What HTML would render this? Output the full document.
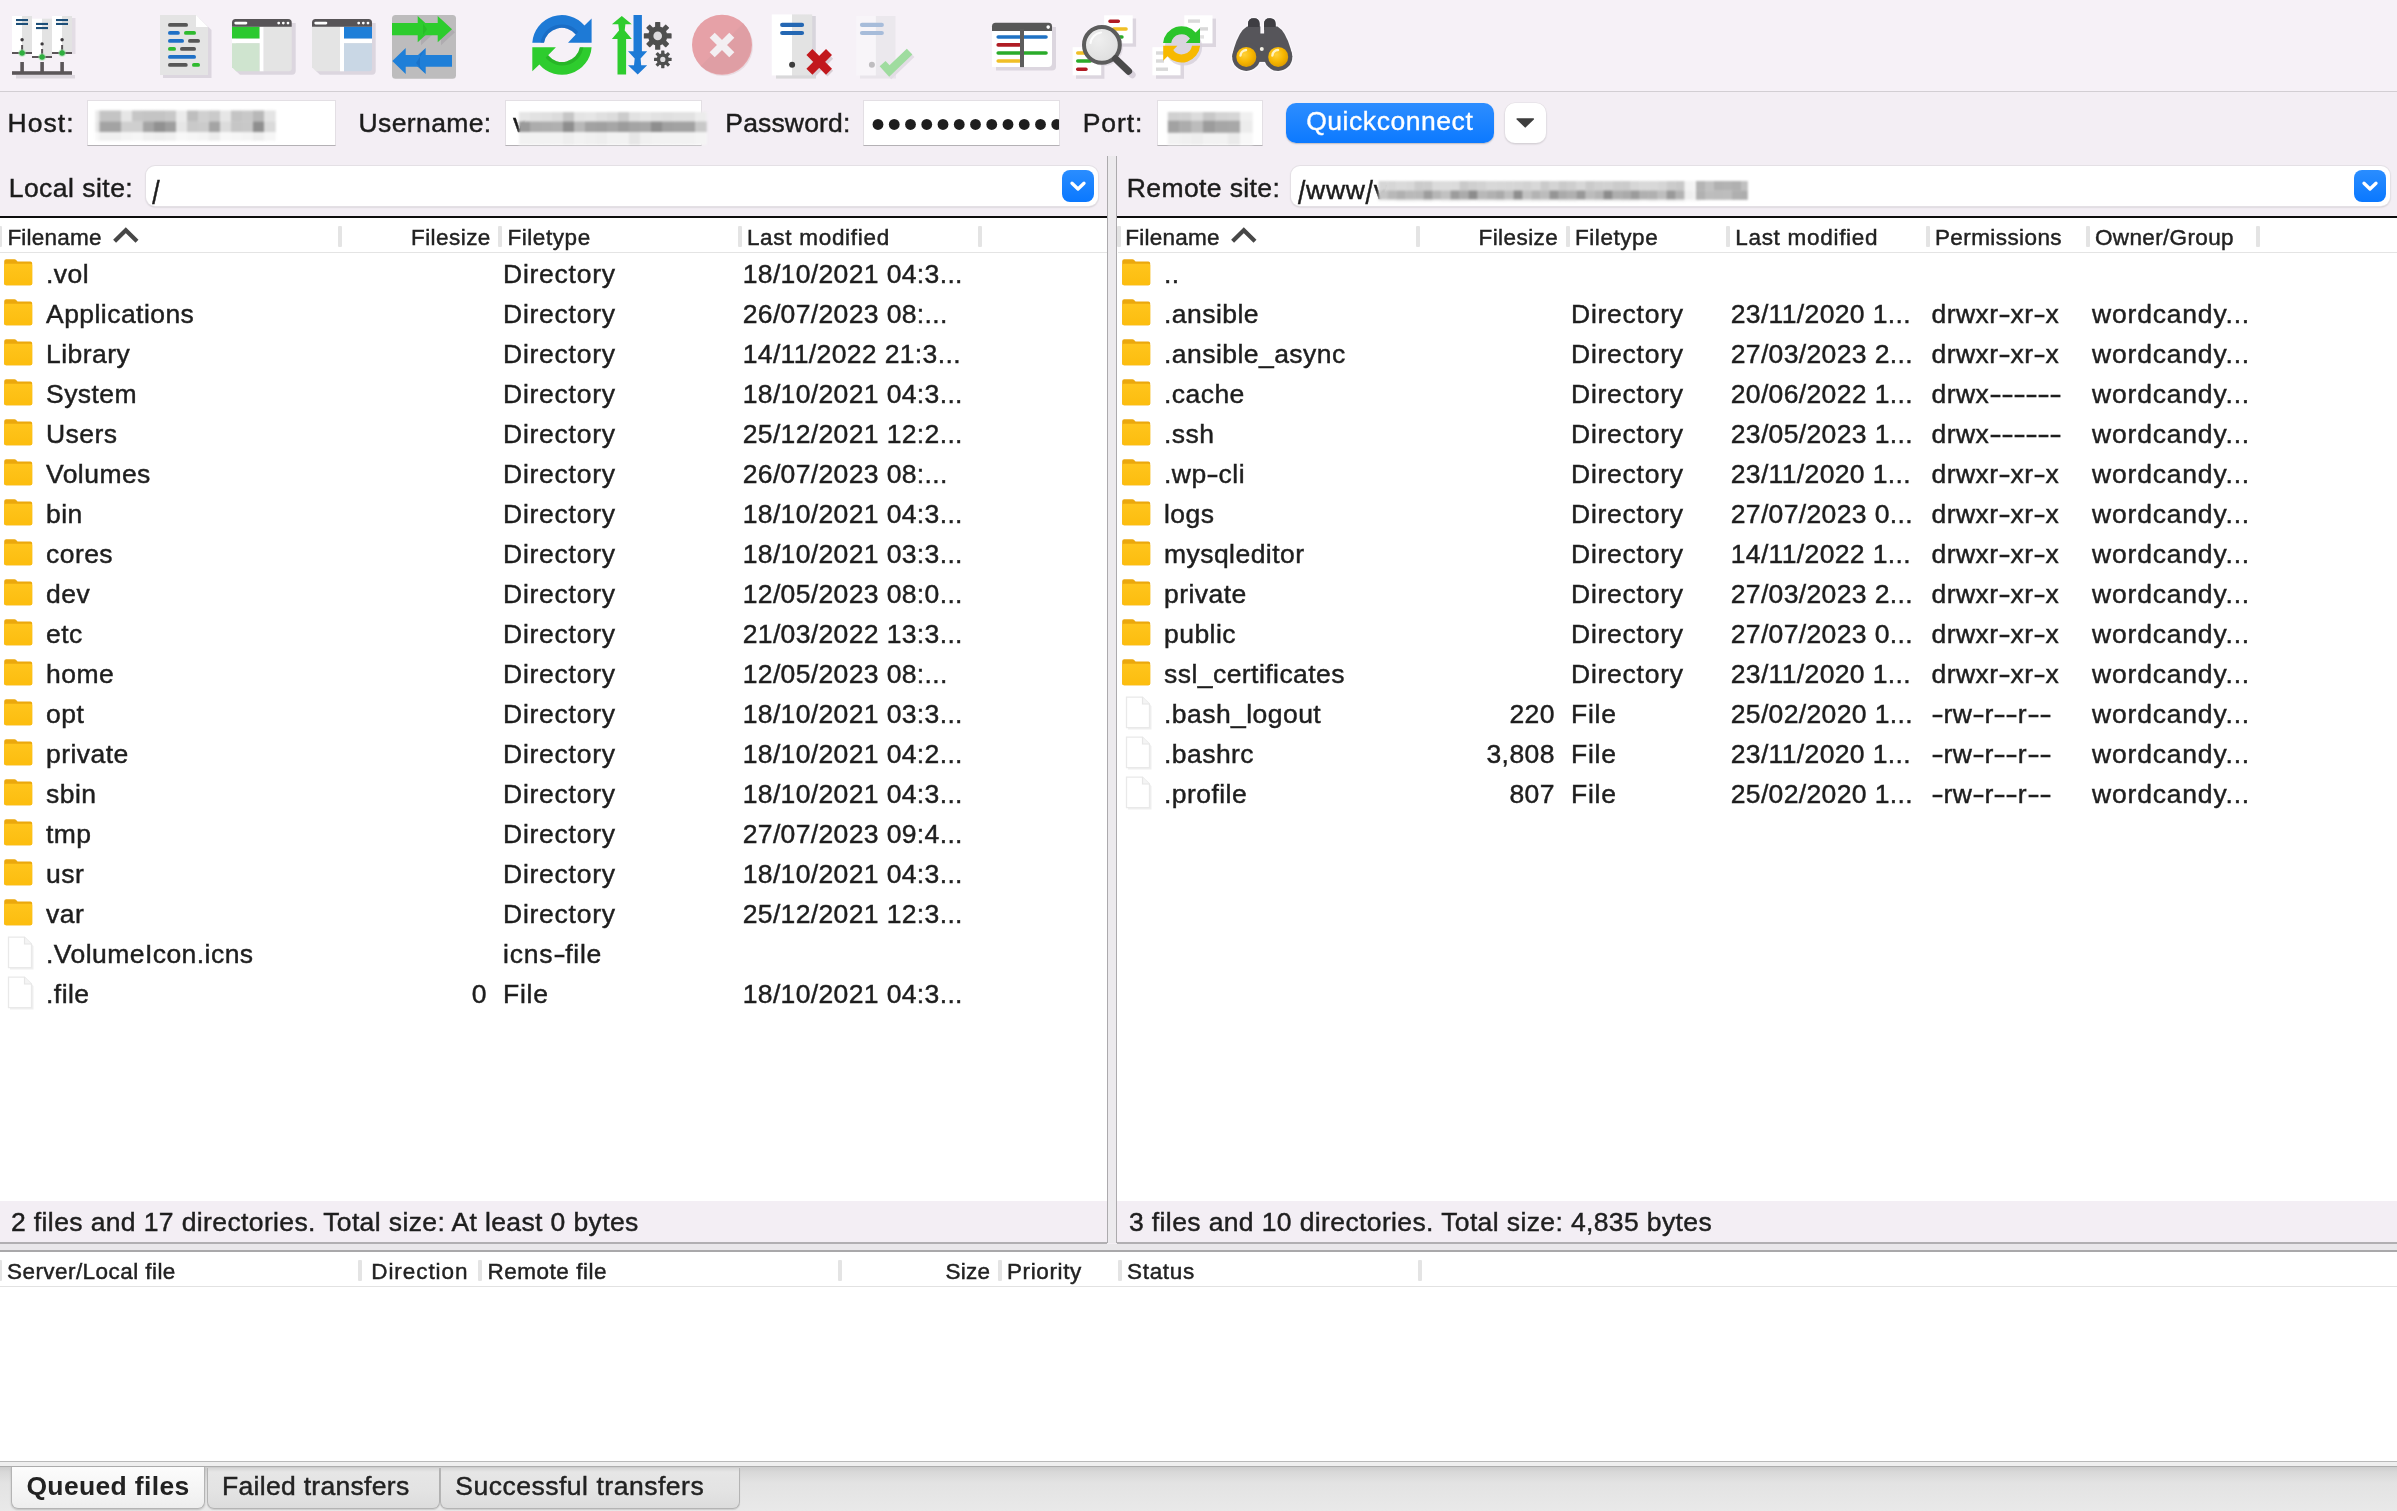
<!DOCTYPE html>
<html lang="en">
<head>
<meta charset="utf-8">
<title>FileZilla</title>
<style>
*{box-sizing:border-box;margin:0;padding:0}
html,body{width:2397px;height:1511px;overflow:hidden;background:#f3eef4}
body{font-family:"Liberation Sans",sans-serif;color:#222;position:relative;-webkit-text-stroke:.45px currentColor}
.abs{position:absolute}
#toolbar{position:absolute;left:0;top:0;width:2397px;height:91px;background:#f6f1f7}
#tbline{position:absolute;left:0;top:90.6px;width:2397px;height:1.2px;background:#d2ced3}
#qc{position:absolute;left:0;top:93px;width:2397px;height:64px;background:#f3eef4}
.lbl{position:absolute;font-size:26.5px;line-height:32px;color:#1c1c1c;white-space:nowrap}
.inp{position:absolute;background:#fff;border:1px solid #e3dfe4;border-bottom-color:#b4b1b5;height:46px}
.combo{position:absolute;background:#fff;border-radius:9px;box-shadow:0 0 0 1px #e4e0e5,0 1px 2px rgba(0,0,0,.25);height:40px}
.bluebtn{position:absolute;width:32px;height:32px;border-radius:8px;background:linear-gradient(#2a8dff,#0a78ff)}
.pane{position:absolute;background:#fff}
.hdr{position:absolute;font-size:22.5px;line-height:30px;color:#222;white-space:nowrap;letter-spacing:.5px}
.sep{position:absolute;width:4px;height:21px;background:#e4e4e4;border-radius:1px}
.c{position:absolute;font-size:26.5px;line-height:40px;height:40px;color:#1e1e1e;white-space:nowrap;letter-spacing:.45px}
.c i{font-style:normal;display:inline-block;letter-spacing:0;transform:scaleX(1.42);margin:0 1.6px}
.c.r{text-align:right}
.ic{position:absolute}
.status{position:absolute;font-size:26.5px;line-height:40px;color:#1e1e1e;white-space:nowrap;letter-spacing:.38px}
.tab{position:absolute;top:1467.5px;height:41px;font-size:26.5px;line-height:36px;color:#222;white-space:nowrap;border:1px solid #b4b4b4;border-top:none;border-radius:0 0 7px 7px;background:linear-gradient(#d6d6d6 0,#e6e6e6 4px,#e3e3e3 60%,#dcdcdc);box-shadow:0 1px 1px rgba(0,0,0,.12)}
.blur{position:absolute;filter:blur(3px)}
</style>
</head>
<body>
<div id="root" style="position:absolute;left:0;top:0;width:2397px;height:1511px;will-change:transform;overflow:hidden">
<svg width="0" height="0" style="position:absolute"><defs><linearGradient id="fg" x1="0" x2="0" y1="0" y2="1"><stop offset="0" stop-color="#ffc51c"/><stop offset="1" stop-color="#fcbd0f"/></linearGradient></defs></svg>
<div id="toolbar"></div>
<div id="tbline"></div>
<svg class="abs" style="left:0;top:0" width="2397" height="91" viewBox="0 0 2397 91">
<defs>
<linearGradient id="gsrv" x1="0" x2="1" y1="0" y2="0"><stop offset="0" stop-color="#fff"/><stop offset=".5" stop-color="#fff"/><stop offset=".5" stop-color="#e3e3e3"/><stop offset="1" stop-color="#e3e3e3"/></linearGradient>
<radialGradient id="glens" cx=".4" cy=".38" r=".7"><stop offset="0" stop-color="#ffd23a"/><stop offset=".55" stop-color="#f7b600"/><stop offset="1" stop-color="#d99800"/></radialGradient>
<radialGradient id="gglass" cx=".4" cy=".35" r=".75"><stop offset="0" stop-color="#efefef"/><stop offset="1" stop-color="#dcdcdc"/></radialGradient>
</defs>

<!-- 1 site manager -->
<g>
<rect x="16" y="75" width="59" height="3.5" fill="#dcd7de"/>
<rect x="72" y="18" width="3.5" height="36" fill="#e3dde5"/>
<rect x="12" y="16" width="20" height="37" fill="url(#gsrv)"/>
<rect x="52" y="16" width="20" height="37" fill="url(#gsrv)"/>
<rect x="32" y="18.7" width="20" height="38.5" fill="url(#gsrv)"/>
<g fill="#1d4f78"><rect x="16" y="19" width="12" height="2.1"/><rect x="16" y="22.9" width="12" height="2.1"/><rect x="36" y="22.9" width="12" height="2.1"/><rect x="36" y="27" width="12" height="2.1"/><rect x="56" y="19" width="12" height="2.1"/><rect x="56" y="22.9" width="12" height="2.1"/></g>
<g fill="#3e3b3e"><circle cx="22.1" cy="39.8" r="1.7"/><circle cx="42.1" cy="43.9" r="1.7"/><circle cx="62.1" cy="39.8" r="1.7"/></g>
<g fill="#5b5659"><rect x="21.1" y="45" width="2" height="8"/><rect x="41.1" y="49" width="2" height="8"/><rect x="61.1" y="45" width="2" height="8"/>
<rect x="12" y="52" width="20" height="2"/><rect x="32" y="56" width="20" height="2"/><rect x="52" y="52" width="20" height="2"/>
<rect x="20.3" y="62" width="3.6" height="10"/><rect x="40.3" y="62" width="3.6" height="10"/><rect x="60.3" y="62" width="3.6" height="10"/>
<rect x="12" y="71.2" width="60" height="3.6"/></g>
<g fill="#9fe0a8" opacity=".6"><circle cx="22.1" cy="53" r="3.8"/><circle cx="42.1" cy="57" r="3.8"/><circle cx="62.1" cy="53" r="3.8"/></g><g fill="#2fae3f"><circle cx="22.1" cy="53" r="2.7"/><circle cx="42.1" cy="57" r="2.7"/><circle cx="62.1" cy="53" r="2.7"/></g>
</g>

<!-- 2 message log -->
<g>
<path d="M163 18 H199 L211.5 30 V78 H163 Z" fill="#dcd6df"/>
<path d="M160 15 H196 L208 27 V75 H160 Z" fill="#e4e4e4"/>
<path d="M196 15 V27 H208 Z" fill="#fff"/>
<g fill="#575757"><rect x="168" y="23" width="20" height="3.8" rx="1.9"/><rect x="188" y="39" width="12" height="3.8" rx="1.9"/><rect x="180" y="47" width="16" height="3.8" rx="1.9"/><rect x="168" y="63" width="19.7" height="3.8" rx="1.9"/></g>
<g fill="#1f70c6"><rect x="168" y="31" width="11.8" height="3.8" rx="1.9"/><rect x="168" y="39" width="16" height="3.8" rx="1.9"/><rect x="168" y="55" width="28" height="3.8" rx="1.9"/></g>
<g fill="#2fba2f"><rect x="184" y="31" width="12" height="3.8" rx="1.9"/><rect x="168" y="47" width="8" height="3.8" rx="1.9"/><rect x="192" y="63" width="8" height="3.8" rx="1.9"/></g>
</g>

<!-- 3 local tree -->
<g>
<path d="M236 23 H295.7 V71 Q295.7 74.7 292 74.7 H240 L236 71 Z" fill="#dcd6df"/>
<path d="M232 26.7 H259.7 V38.7 H232 Z" fill="#2bc92f"/>
<rect x="232" y="38.7" width="28" height="4.6" fill="#fff"/>
<path d="M232 43.3 H259.7 V71.3 H236 L232 67.3 Z" fill="#cfe4cf"/>
<rect x="259.7" y="26.7" width="4" height="44.6" fill="#fff"/>
<path d="M263.7 26.7 H291.7 V68.3 Q291.7 71.3 288.7 71.3 H263.7 Z" fill="#e4e4e4"/>
<path d="M232 26.7 V22.5 Q232 19 235.5 19 H288.2 Q291.7 19 291.7 22.5 V26.7 Z" fill="#575457"/>
<rect x="234.3" y="21.7" width="13" height="2.7" rx="1.3" fill="#fff"/>
<g fill="#fff"><circle cx="278.7" cy="23.1" r="1.4"/><circle cx="283.3" cy="23.1" r="1.4"/><circle cx="288" cy="23.1" r="1.4"/></g>
</g>

<!-- 4 remote tree -->
<g>
<path d="M316 23 H375.7 V71 Q375.7 74.7 372 74.7 H320 L316 71 Z" fill="#dcd6df"/>
<path d="M312 26.7 H340 V71.3 H316 L312 67.3 Z" fill="#e4e4e4"/>
<rect x="340" y="26.7" width="4" height="44.6" fill="#fff"/>
<rect x="344" y="26.7" width="28" height="12" fill="#1f7fd8"/>
<rect x="344" y="38.7" width="28" height="4.6" fill="#fff"/>
<path d="M344 43.3 H372 V68.3 Q372 71.3 369 71.3 H344 Z" fill="#c9d7e5"/>
<path d="M312 26.7 V22.5 Q312 19 315.5 19 H368.5 Q372 19 372 22.5 V26.7 Z" fill="#575457"/>
<rect x="314.3" y="21.7" width="13" height="2.7" rx="1.3" fill="#fff"/>
<g fill="#fff"><circle cx="358.7" cy="23.1" r="1.4"/><circle cx="363.3" cy="23.1" r="1.4"/><circle cx="368" cy="23.1" r="1.4"/></g>
</g>

<!-- 5 transfer queue (toggled) -->
<g>
<rect x="392" y="15" width="64" height="63.7" rx="3.5" fill="#bdbcbd"/>
<path d="M421 19 L435 32.2 L421 45.3 Z M441 19 L455 32.2 L441 45.3 Z" fill="#aaa5ab" opacity=".7"/>
<path d="M392 23 H417.7 V16 L432 29.2 L417.7 42.3 V35.3 H392 Z" fill="#2dcc2d"/>
<path d="M425 23 H437.7 V16 L452 29.2 L437.7 42.3 V35.3 H425 Z" fill="#2dcc2d"/>
<path d="M452 55 H425.7 V48 L411.4 61 L425.7 74 V66.7 H452 Z" fill="#1f7fd8"/>
<path d="M420 55 H405.7 V48 L392.3 61 L405.7 74 V66.7 H420 Z" fill="#1f7fd8"/>
<path d="M425.7 48 L420 55 V66.7 L425.7 74 L416 63 Z" fill="#1667bd" opacity=".55"/>
<path d="M417.7 16 L423 23 V35.3 L417.7 42.3 L427 29.2 Z" fill="#25b325" opacity=".55"/>
</g>

<!-- 6 refresh -->
<g>
<path id="rfh" d="M532.3 42.7 A29.7 29.7 0 0 1 584.5 25.5 L591.6 18.6 V42.7 H568 L575.8 34.6 A18 18 0 0 0 544 42.7 Z" fill="#1e7ad6"/>
<path d="M532.3 42.7 A29.7 29.7 0 0 1 584.5 25.5 L591.6 18.6 V42.7 H568 L575.8 34.6 A18 18 0 0 0 544 42.7 Z" fill="#2ecc2e" transform="rotate(180 561.95 44.95)"/>
<path d="M544 42.7 A18 18 0 0 1 575.8 34.6 L578.2 32.100 A21.4 21.4 0 0 0 540.6 42.7 Z" fill="#1560b5" opacity=".5"/>
<path d="M544 42.7 A18 18 0 0 1 575.8 34.6 L578.2 32.1 A21.4 21.4 0 0 0 540.6 42.7 Z" fill="#1f9f1f" opacity=".5" transform="rotate(180 561.95 44.95)"/>
</g>

<!-- 7 process queue -->
<g>
<path d="M617.5 74.6 V38.9 H611.9 L619 30.5 L618.3 24.3 H611.9 L621.8 16 L631.8 24.3 H625.4 L624.7 30.5 L631.8 38.9 H626.1 V74.6 Z" fill="#2ecc2e"/>
<path d="M633.5 15.1 H641.9 V51.3 H647.2 L640.6 58.5 L641.2 65.2 H647.2 L637.7 74.6 L628 65.2 H634 L634.7 58.5 L628 51.3 H633.5 Z" fill="#1e7ad6"/>
<g fill="#4f4f4f">
<g id="gear1" transform="translate(657.7 35.9)">
<circle r="9.6"/>
<g id="teeth"><rect x="-2.6" y="-13.9" width="5.2" height="27.8" rx=".6"/><rect x="-2.6" y="-13.9" width="5.2" height="27.8" rx=".6" transform="rotate(45)"/><rect x="-2.6" y="-13.9" width="5.2" height="27.8" rx=".6" transform="rotate(90)"/><rect x="-2.6" y="-13.9" width="5.2" height="27.8" rx=".6" transform="rotate(135)"/></g>
</g>
<g transform="translate(662.8 59.4) scale(.633)"><circle r="9.6"/><rect x="-2.6" y="-13.9" width="5.2" height="27.8" rx=".6"/><rect x="-2.6" y="-13.9" width="5.2" height="27.8" rx=".6" transform="rotate(45)"/><rect x="-2.6" y="-13.9" width="5.2" height="27.8" rx=".6" transform="rotate(90)"/><rect x="-2.6" y="-13.9" width="5.2" height="27.8" rx=".6" transform="rotate(135)"/></g>
</g>
<circle cx="657.7" cy="35.9" r="4.3" fill="#dedcdf"/><circle cx="662.8" cy="59.4" r="2.6" fill="#dedcdf"/>
</g>

<!-- 8 cancel (disabled) -->
<g>
<circle cx="723" cy="46" r="30" fill="#e9dde3"/>
<circle cx="722" cy="44.7" r="30" fill="#e6a1a7"/>
<path d="M722 14.700000000000003 A30 30 0 0 1 743.2 65.9 L700.8 23.5 A30 30 0 0 1 722 14.7 Z" fill="#eaa5ab" opacity="0"/>
<path d="M743.2 23.5 A30 30 0 0 1 700.8 65.9 Z" fill="#d89da3" opacity=".55"/>
<path d="M712.2 35.2 L731.8 54.800 M731.8 35.2 L712.2 54.8" stroke="#f3eff2" stroke-width="7.2" stroke-linecap="butt" fill="none"/>
</g>

<!-- 9 disconnect -->
<g>
<rect x="776" y="75" width="40" height="3.6" fill="#d9d8da"/>
<rect x="812" y="16" width="3.8" height="60" fill="#d8d5dc"/>
<rect x="771.8" y="14.4" width="40.4" height="61" fill="url(#gsrv)"/>
<rect x="780.1" y="22.8" width="24" height="4.2" rx="2.1" fill="#2467b3"/><rect x="780.1" y="30.9" width="24" height="4.2" rx="2.1" fill="#2467b3"/>
<circle cx="792.1" cy="64.8" r="3" fill="#3c3c3c"/>
<path d="M810.5 53.3 L828.3 71.1 M828.3 53.3 L810.5 71.1" stroke="#d9cfd6" stroke-width="8" fill="none" transform="translate(2 2.5)"/>
<path d="M809.4 52 L829 71.7 M829 52 L809.4 71.7" stroke="#c2181d" stroke-width="8.4" fill="none"/>
</g>

<!-- 10 reconnect (disabled) -->
<g>
<rect x="860" y="75" width="36" height="3.6" fill="#e9e5eb"/>
<rect x="856.3" y="16" width="19.6" height="59.5" fill="#f8f5f9"/>
<rect x="875.9" y="16" width="19.6" height="59.5" fill="#ebe8ed"/>
<rect x="859.9" y="22.8" width="24" height="4.2" rx="2.1" fill="#a7bcda"/><rect x="859.9" y="30.9" width="24" height="4.2" rx="2.1" fill="#a7bcda"/>
<circle cx="871.9" cy="64.8" r="3" fill="#bfbdc0"/>
<path d="M882.6 63.6 L889.4 71 L909.6 51.6" stroke="#e3dde5" stroke-width="8" fill="none" transform="translate(2 2.5)"/>
<path d="M882.6 63.6 L889.4 71 L909.6 51.6" stroke="#9fdc9f" stroke-width="8" fill="none"/>
</g>

<!-- 11 directory comparison -->
<g>
<path d="M996 27 H1056 V66.5 Q1056 70.5 1052 70.5 H996 Z" fill="#dcd6df"/>
<path d="M992 30.9 H1052 V63.1 Q1052 67.1 1048 67.1 H992 Z" fill="#fff"/>
<path d="M992 30.9 V26.3 Q992 22.8 995.5 22.8 H1048.5 Q1052 22.8 1052 26.3 V30.9 Z" fill="#575757"/>
<circle cx="1048.2" cy="27.1" r="1.8" fill="#fff"/>
<rect x="996.4" y="35.2" width="51.4" height="3.6" rx="1.8" fill="#1f72c4"/>
<rect x="996.4" y="43.1" width="25" height="3.6" rx="1.8" fill="#b01c24"/>
<rect x="996.4" y="51.2" width="51.4" height="3.6" rx="1.8" fill="#2aab2a"/>
<rect x="996.4" y="59.2" width="25" height="3.6" rx="1.8" fill="#f0bf26"/>
<rect x="1020" y="29" width="4" height="38.1" fill="#5c5c5c"/>
</g>

<!-- 12 search -->
<g>
<rect x="1107.5" y="18.5" width="28.6" height="28.2" fill="#dcd6df"/>
<rect x="1104.2" y="15.3" width="28.5" height="28.1" fill="#fff"/>
<rect x="1108.3" y="19.4" width="11.7" height="3.5" rx="1.7" fill="#b01c24"/>
<rect x="1112" y="27.2" width="15.8" height="3.5" rx="1.7" fill="#f0bf26"/>
<rect x="1112" y="35.2" width="11.7" height="3.5" rx="1.7" fill="#2aab2a"/>
<rect x="1076" y="50.5" width="28.4" height="28.3" fill="#dcd6df"/>
<rect x="1072.6" y="47.2" width="28.6" height="28.1" fill="#fff"/>
<rect x="1076" y="51.2" width="16" height="3.5" rx="1.7" fill="#f0bf26"/>
<rect x="1076" y="59.2" width="16" height="3.5" rx="1.7" fill="#2aab2a"/>
<rect x="1076" y="67.4" width="11.7" height="3.5" rx="1.7" fill="#b01c24"/>
<path d="M1116.2 59.6 L1129.7 72.3" stroke="#d9d2dc" stroke-width="7" stroke-linecap="round" transform="translate(2.5 2.5)"/>
<circle cx="1103.9" cy="46.9" r="19" fill="#d9d2dc" opacity=".6"/>
<circle cx="1101.9" cy="44.9" r="17.9" fill="url(#gglass)" stroke="#5c5c5c" stroke-width="4"/>
<path d="M1090.5 43 A12 12 0 0 1 1101 32.5" stroke="#fff" stroke-width="2.2" fill="none" stroke-linecap="round" opacity=".9"/>
<path d="M1115.5 58.8 L1128.6 71.2" stroke="#4a4a4a" stroke-width="7" stroke-linecap="round"/>
</g>

<!-- 13 sync browsing -->
<g>
<rect x="1187.6" y="18.6" width="28.4" height="28.4" fill="#dcd6df"/>
<rect x="1184.3" y="15.3" width="28.2" height="28.1" fill="#fff"/>
<rect x="1188" y="19.4" width="12" height="3.4" fill="#d9d9d9"/><rect x="1200" y="27.2" width="8" height="3.4" fill="#d9d9d9"/><rect x="1200" y="35.2" width="4" height="3.4" fill="#e2e2e2"/>
<rect x="1156" y="50.5" width="28" height="28.3" fill="#dcd6df"/>
<rect x="1152.4" y="47.2" width="28.1" height="28.1" fill="#fff"/>
<rect x="1156" y="51.3" width="8" height="3.4" fill="#d9d9d9"/><rect x="1156" y="59.3" width="8" height="3.4" fill="#d9d9d9"/><rect x="1156" y="67.5" width="12" height="3.4" fill="#d9d9d9"/>
<circle cx="1183.5" cy="47" r="18.6" fill="#d6cfd9" opacity=".8"/>
<circle cx="1181.7" cy="44.9" r="14" fill="#dad4df"/>
<path d="M1163.1 43 A18.6 18.6 0 0 1 1195.6 32.5 L1200 28 V43 H1185.8 L1190 38.6 A10.5 10.5 0 0 0 1171.2 43 Z" fill="#2bc42b"/>
<path d="M1163.1 43 A18.6 18.6 0 0 1 1195.6 32.5 L1200 28 V43 H1185.8 L1190 38.6 A10.5 10.5 0 0 0 1171.2 43 Z" fill="#f7b900" transform="rotate(180 1181.6 44.35)"/>
</g>

<!-- 14 binoculars -->
<g>
<g fill="#fbf8fc" stroke="#fbf8fc" stroke-width="2.4" stroke-linejoin="round"><use href="#binobody"/></g>
<g id="binobody" fill="#56555a">
<path d="M1248 24 Q1248 18.3 1253.8 18.3 Q1259.6 18.3 1259.6 24 V30 H1248 Z"/>
<path d="M1264 24 Q1264 18.3 1269.8 18.3 Q1275.6 18.3 1275.6 24 V30 H1264 Z"/>
<path d="M1247 26.5 H1260.4 V57 H1232.2 L1233.8 49 Q1239 31 1247 26.500 Z"/>
<path d="M1277.5 26.5 H1264.1 V57 H1292.3 L1290.7 49 Q1285.500 31 1277.5 26.5 Z"/>
<circle cx="1246.3" cy="56.9" r="14.1"/><circle cx="1278.2" cy="56.9" r="14.1"/>
<rect x="1258" y="33.5" width="8.5" height="28.4"/>
</g>
<path d="M1248 24 Q1248 18.3 1253.8 18.3 Q1259.6 18.3 1259.6 24 V27 H1248 Z M1264 24 Q1264 18.3 1269.8 18.3 Q1275.6 18.3 1275.6 24 V27 H1264 Z" fill="#3f3e43"/>
<circle cx="1246.3" cy="56.9" r="10" fill="url(#glens)"/>
<circle cx="1278.2" cy="56.9" r="10" fill="url(#glens)"/>
<path d="M1240.5 55.500 A6 6 0 0 1 1246 50" stroke="#fff3c4" stroke-width="2.4" fill="none" stroke-linecap="round"/>
<path d="M1272.4 55.5 A6 6 0 0 1 1278 50" stroke="#fff3c4" stroke-width="2.4" fill="none" stroke-linecap="round"/>
<circle cx="1261.8" cy="48.9" r="2" fill="#f2f0e6"/>
</g>
</svg>


<!-- quickconnect bar -->
<div class="lbl" style="left:7.5px;top:107px;letter-spacing:1.04px">Host:</div>
<div class="inp" style="left:87px;top:100px;width:249px"></div>
<div class="lbl" style="left:358.5px;top:107px;letter-spacing:.39px">Username:</div>
<div class="inp" style="left:505px;top:100px;width:197px"></div>
<div class="lbl" style="left:513px;top:107px">v</div>
<div class="lbl" style="left:725.3px;top:107px;letter-spacing:.16px">Password:</div>
<div class="inp" style="left:863px;top:100px;width:197px;overflow:hidden"><span style="position:absolute;left:7px;top:-.5px;font-size:40px;line-height:46px;letter-spacing:2.25px;color:#1e1e1e;-webkit-text-stroke:0;white-space:nowrap">•••••••••••••</span></div>
<div class="lbl" style="left:1082.8px;top:107px;letter-spacing:.875px">Port:</div>
<div class="inp" style="left:1157px;top:100px;width:105.5px"></div>
<div class="abs" style="left:1285.5px;top:103px;width:208.500px;height:40px;border-radius:10px;background:linear-gradient(#2d8dff,#0c79ff);box-shadow:0 1px 1.5px rgba(0,0,0,.22);color:#fff;font-size:26.5px;line-height:37px;text-align:center;letter-spacing:.55px;-webkit-text-stroke:.35px #fff">Quickconnect</div>
<div class="abs" style="left:1505px;top:102.5px;width:40.5px;height:40.5px;border-radius:10px;background:#fff;box-shadow:0 0 0 .5px #e2dee3,0 1px 2px rgba(0,0,0,.22)"><svg width="41" height="41" viewBox="0 0 41 41" style="position:absolute;left:0;top:0"><path d="M12.2 16 L28.3 16 L20.25 23.8 Z" fill="#3e3e3e" stroke="#3e3e3e" stroke-width="1.6" stroke-linejoin="round"/></svg></div>

<!-- splitter -->
<div class="abs" style="left:1107px;top:156px;width:9.5px;height:1087px;background:#eceaed;border-left:1.6px solid #acaaad;border-right:1.6px solid #acaaad"></div>

<!-- local site bar -->
<div class="lbl" style="left:8.7px;top:172px;letter-spacing:.47px">Local site:</div>
<div class="combo" style="left:146px;top:166px;width:952px"></div>
<div class="lbl" style="left:152.3px;top:174px"><span style="display:inline-block;transform:scaleY(1.24);transform-origin:50% 6px">/</span></div>
<div class="bluebtn" style="left:1062px;top:170px"><svg width="32" height="32" viewBox="0 0 32 32"><path d="M10 13.2 L16 19 L22 13.2" fill="none" stroke="#fff" stroke-width="3.3" stroke-linecap="round" stroke-linejoin="round"/></svg></div>

<!-- remote site bar -->
<div class="lbl" style="left:1126.8px;top:172px;letter-spacing:.39px">Remote site:</div>
<div class="combo" style="left:1291px;top:166px;width:1099px"></div>
<div class="lbl" style="left:1298px;top:174px;letter-spacing:.7px"><span style="display:inline-block;transform:scaleY(1.24);transform-origin:50% 6px">/</span>www<span style="display:inline-block;transform:scaleY(1.24);transform-origin:50% 6px">/</span>v</div>
<div class="bluebtn" style="left:2354px;top:170px"><svg width="32" height="32" viewBox="0 0 32 32"><path d="M10 13.2 L16 19 L22 13.2" fill="none" stroke="#fff" stroke-width="3.3" stroke-linecap="round" stroke-linejoin="round"/></svg></div>

<svg class="abs" style="left:0;top:0;filter:blur(.8px)" width="2397" height="216" viewBox="0 0 2397 216"><rect x="95.5" y="110.5" width="4.3" height="11.3" fill="#e8e8e8"/><rect x="95.5" y="121.5" width="4.3" height="10.8" fill="#e4e4e4"/><rect x="95.5" y="132" width="4.3" height="8.8" fill="#f8f8f8"/><rect x="99.5" y="110.5" width="21.8" height="11.3" fill="#c4c4c4"/><rect x="99.5" y="121.5" width="21.8" height="10.8" fill="#a3a3a3"/><rect x="99.5" y="132" width="21.8" height="8.8" fill="#f0f0f0"/><rect x="121" y="110.5" width="11.3" height="11.3" fill="#e6e6e6"/><rect x="121" y="121.5" width="11.3" height="10.8" fill="#cfcfcf"/><rect x="121" y="132" width="11.3" height="8.8" fill="#f4f4f4"/><rect x="132" y="110.5" width="11.3" height="11.3" fill="#c6c6c6"/><rect x="132" y="121.5" width="11.3" height="10.8" fill="#cfcfcf"/><rect x="132" y="132" width="11.3" height="8.8" fill="#f6f6f6"/><rect x="143" y="110.5" width="11.3" height="11.3" fill="#c4c4c4"/><rect x="143" y="121.5" width="11.3" height="10.8" fill="#a4a4a4"/><rect x="143" y="132" width="11.3" height="8.8" fill="#f0f0f0"/><rect x="154" y="110.5" width="11.3" height="11.3" fill="#c4c4c4"/><rect x="154" y="121.5" width="11.3" height="10.8" fill="#919191"/><rect x="154" y="132" width="11.3" height="8.8" fill="#eeeeee"/><rect x="165" y="110.5" width="11.3" height="11.3" fill="#c8c8c8"/><rect x="165" y="121.5" width="11.3" height="10.8" fill="#9e9e9e"/><rect x="165" y="132" width="11.3" height="8.8" fill="#f0f0f0"/><rect x="176" y="110.5" width="11.3" height="11.3" fill="#ebebeb"/><rect x="176" y="121.5" width="11.3" height="10.8" fill="#e6e6e6"/><rect x="176" y="132" width="11.3" height="8.8" fill="#f8f8f8"/><rect x="187" y="110.5" width="11.3" height="11.3" fill="#bebebe"/><rect x="187" y="121.5" width="11.3" height="10.8" fill="#c9c9c9"/><rect x="187" y="132" width="11.3" height="8.8" fill="#f6f6f6"/><rect x="198" y="110.5" width="11.3" height="11.3" fill="#d0d0d0"/><rect x="198" y="121.5" width="11.3" height="10.8" fill="#cbcbcb"/><rect x="198" y="132" width="11.3" height="8.8" fill="#f4f4f4"/><rect x="209" y="110.5" width="11.3" height="11.3" fill="#cacaca"/><rect x="209" y="121.5" width="11.3" height="10.8" fill="#a4a4a4"/><rect x="209" y="132" width="11.3" height="8.8" fill="#ececec"/><rect x="220" y="110.5" width="11.3" height="11.3" fill="#e6e6e6"/><rect x="220" y="121.5" width="11.3" height="10.8" fill="#dcdcdc"/><rect x="220" y="132" width="11.3" height="8.8" fill="#f8f8f8"/><rect x="231" y="110.5" width="11.3" height="11.3" fill="#c4c4c4"/><rect x="231" y="121.5" width="11.3" height="10.8" fill="#c6c6c6"/><rect x="231" y="132" width="11.3" height="8.8" fill="#f6f6f6"/><rect x="242" y="110.5" width="11.3" height="11.3" fill="#c8c8c8"/><rect x="242" y="121.5" width="11.3" height="10.8" fill="#c8c8c8"/><rect x="242" y="132" width="11.3" height="8.8" fill="#f4f4f4"/><rect x="253" y="110.5" width="11.3" height="11.3" fill="#b8b8b8"/><rect x="253" y="121.5" width="11.3" height="10.8" fill="#8f8f8f"/><rect x="253" y="132" width="11.3" height="8.8" fill="#eeeeee"/><rect x="264" y="110.5" width="11.8" height="11.3" fill="#e4e4e4"/><rect x="264" y="121.5" width="11.8" height="10.8" fill="#dadada"/><rect x="264" y="132" width="11.8" height="8.8" fill="#f6f6f6"/><rect x="519" y="112" width="11.3" height="9.8" fill="#e6e6e6"/><rect x="519" y="121.5" width="11.3" height="10.8" fill="#9a9a9a"/><rect x="519" y="132" width="11.3" height="12.9" fill="#f2f2f2"/><rect x="530" y="112" width="11.3" height="9.8" fill="#e2e2e2"/><rect x="530" y="121.5" width="11.3" height="10.8" fill="#acacac"/><rect x="530" y="132" width="11.3" height="12.9" fill="#f2f2f2"/><rect x="541" y="112" width="11.3" height="9.8" fill="#e0e0e0"/><rect x="541" y="121.5" width="11.3" height="10.8" fill="#aeaeae"/><rect x="541" y="132" width="11.3" height="12.9" fill="#f2f2f2"/><rect x="552" y="112" width="11.3" height="9.8" fill="#dcdcdc"/><rect x="552" y="121.5" width="11.3" height="10.8" fill="#b0b0b0"/><rect x="552" y="132" width="11.3" height="12.9" fill="#f2f2f2"/><rect x="563" y="112" width="11.3" height="9.8" fill="#c6c6c6"/><rect x="563" y="121.5" width="11.3" height="10.8" fill="#8e8e8e"/><rect x="563" y="132" width="11.3" height="12.9" fill="#eeeeee"/><rect x="574" y="112" width="11.3" height="9.8" fill="#e4e4e4"/><rect x="574" y="121.5" width="11.3" height="10.8" fill="#b8b8b8"/><rect x="574" y="132" width="11.3" height="12.9" fill="#f2f2f2"/><rect x="585" y="112" width="11.3" height="9.8" fill="#e6e6e6"/><rect x="585" y="121.5" width="11.3" height="10.8" fill="#a2a2a2"/><rect x="585" y="132" width="11.3" height="12.9" fill="#f0f0f0"/><rect x="596" y="112" width="11.3" height="9.8" fill="#e0e0e0"/><rect x="596" y="121.5" width="11.3" height="10.8" fill="#a0a0a0"/><rect x="596" y="132" width="11.3" height="12.9" fill="#eeeeee"/><rect x="607" y="112" width="11.3" height="9.8" fill="#dcdcdc"/><rect x="607" y="121.5" width="11.3" height="10.8" fill="#a6a6a6"/><rect x="607" y="132" width="11.3" height="12.9" fill="#f2f2f2"/><rect x="618" y="112" width="11.3" height="9.8" fill="#cccccc"/><rect x="618" y="121.5" width="11.3" height="10.8" fill="#9c9c9c"/><rect x="618" y="132" width="11.3" height="12.9" fill="#f2f2f2"/><rect x="629" y="112" width="11.3" height="9.8" fill="#e2e2e2"/><rect x="629" y="121.5" width="11.3" height="10.8" fill="#a4a4a4"/><rect x="629" y="132" width="11.3" height="12.9" fill="#e6e6e6"/><rect x="640" y="112" width="11.3" height="9.8" fill="#e6e6e6"/><rect x="640" y="121.5" width="11.3" height="10.8" fill="#a6a6a6"/><rect x="640" y="132" width="11.3" height="12.9" fill="#f0f0f0"/><rect x="651" y="112" width="11.3" height="9.8" fill="#e2e2e2"/><rect x="651" y="121.5" width="11.3" height="10.8" fill="#8e8e8e"/><rect x="651" y="132" width="11.3" height="12.9" fill="#f2f2f2"/><rect x="662" y="112" width="11.3" height="9.8" fill="#e0e0e0"/><rect x="662" y="121.5" width="11.3" height="10.8" fill="#a0a0a0"/><rect x="662" y="132" width="11.3" height="12.9" fill="#f2f2f2"/><rect x="673" y="112" width="11.3" height="9.8" fill="#e2e2e2"/><rect x="673" y="121.5" width="11.3" height="10.8" fill="#a2a2a2"/><rect x="673" y="132" width="11.3" height="12.9" fill="#f2f2f2"/><rect x="684" y="112" width="11.3" height="9.8" fill="#e2e2e2"/><rect x="684" y="121.5" width="11.3" height="10.8" fill="#a2a2a2"/><rect x="684" y="132" width="11.3" height="12.9" fill="#f2f2f2"/><rect x="695" y="112" width="11.8" height="9.8" fill="#ececec"/><rect x="695" y="121.5" width="11.8" height="10.8" fill="#c8c8c8"/><rect x="695" y="132" width="11.8" height="12.9" fill="#f4f4f4"/><rect x="1167.75" y="112" width="12.1" height="9.1" fill="#d0d0d0"/><rect x="1167.75" y="120.75" width="12.1" height="12.3" fill="#a2a2a2"/><rect x="1167.75" y="132.75" width="12.1" height="12.1" fill="#f2f2f2"/><rect x="1179.5" y="112" width="12.3" height="9.1" fill="#d2d2d2"/><rect x="1179.5" y="120.75" width="12.3" height="12.3" fill="#acacac"/><rect x="1179.5" y="132.75" width="12.3" height="12.1" fill="#f0f0f0"/><rect x="1191.5" y="112" width="11.8" height="9.1" fill="#dcdcdc"/><rect x="1191.5" y="120.75" width="11.8" height="12.3" fill="#bcbcbc"/><rect x="1191.5" y="132.75" width="11.8" height="12.1" fill="#eeeeee"/><rect x="1203" y="112" width="12.8" height="9.1" fill="#c8c8c8"/><rect x="1203" y="120.75" width="12.8" height="12.3" fill="#9c9c9c"/><rect x="1203" y="132.75" width="12.8" height="12.1" fill="#f2f2f2"/><rect x="1215.5" y="112" width="12.8" height="9.1" fill="#d4d4d4"/><rect x="1215.5" y="120.75" width="12.8" height="12.3" fill="#a6a6a6"/><rect x="1215.5" y="132.75" width="12.8" height="12.1" fill="#f2f2f2"/><rect x="1228" y="112" width="12.3" height="9.1" fill="#d6d6d6"/><rect x="1228" y="120.75" width="12.3" height="12.3" fill="#a8a8a8"/><rect x="1228" y="132.75" width="12.3" height="12.1" fill="#eaeaea"/><rect x="1240" y="112" width="12.8" height="9.1" fill="#f0f0f0"/><rect x="1240" y="120.75" width="12.8" height="12.3" fill="#ececec"/><rect x="1240" y="132.75" width="12.8" height="12.1" fill="#f8f8f8"/><rect x="1378.5" y="181" width="9.3" height="9.8" fill="rgb(214,214,214)"/><rect x="1378.5" y="190.5" width="9.3" height="9.3" fill="rgb(197,197,197)"/><rect x="1378.5" y="199.5" width="9.3" height="2.3" fill="rgb(246,246,246)"/><rect x="1387.5" y="181" width="9.3" height="9.8" fill="rgb(214,214,214)"/><rect x="1387.5" y="190.5" width="9.3" height="9.3" fill="rgb(184,184,184)"/><rect x="1387.5" y="199.5" width="9.3" height="2.3" fill="rgb(246,246,246)"/><rect x="1396.5" y="181" width="9.3" height="9.8" fill="rgb(218,218,218)"/><rect x="1396.5" y="190.5" width="9.3" height="9.3" fill="rgb(176,176,176)"/><rect x="1396.5" y="199.5" width="9.3" height="2.3" fill="rgb(240,240,240)"/><rect x="1405.5" y="181" width="9.3" height="9.8" fill="rgb(216,216,216)"/><rect x="1405.5" y="190.5" width="9.3" height="9.3" fill="rgb(185,185,185)"/><rect x="1405.5" y="199.5" width="9.3" height="2.3" fill="rgb(240,240,240)"/><rect x="1414.5" y="181" width="9.3" height="9.8" fill="rgb(203,203,203)"/><rect x="1414.5" y="190.5" width="9.3" height="9.3" fill="rgb(184,184,184)"/><rect x="1414.5" y="199.5" width="9.3" height="2.3" fill="rgb(242,242,242)"/><rect x="1423.5" y="181" width="9.3" height="9.8" fill="rgb(204,204,204)"/><rect x="1423.5" y="190.5" width="9.3" height="9.3" fill="rgb(157,157,157)"/><rect x="1423.5" y="199.5" width="9.3" height="2.3" fill="rgb(238,238,238)"/><rect x="1432.5" y="181" width="9.3" height="9.8" fill="rgb(219,219,219)"/><rect x="1432.5" y="190.5" width="9.3" height="9.3" fill="rgb(182,182,182)"/><rect x="1432.5" y="199.5" width="9.3" height="2.3" fill="rgb(245,245,245)"/><rect x="1441.5" y="181" width="9.3" height="9.8" fill="rgb(220,220,220)"/><rect x="1441.5" y="190.5" width="9.3" height="9.3" fill="rgb(193,193,193)"/><rect x="1441.5" y="199.5" width="9.3" height="2.3" fill="rgb(240,240,240)"/><rect x="1450.5" y="181" width="9.3" height="9.8" fill="rgb(219,219,219)"/><rect x="1450.5" y="190.5" width="9.3" height="9.3" fill="rgb(156,156,156)"/><rect x="1450.5" y="199.5" width="9.3" height="2.3" fill="rgb(239,239,239)"/><rect x="1459.5" y="181" width="9.3" height="9.8" fill="rgb(201,201,201)"/><rect x="1459.5" y="190.5" width="9.3" height="9.3" fill="rgb(171,171,171)"/><rect x="1459.5" y="199.5" width="9.3" height="2.3" fill="rgb(241,241,241)"/><rect x="1468.5" y="181" width="9.3" height="9.8" fill="rgb(207,207,207)"/><rect x="1468.5" y="190.5" width="9.3" height="9.3" fill="rgb(140,140,140)"/><rect x="1468.5" y="199.5" width="9.3" height="2.3" fill="rgb(245,245,245)"/><rect x="1477.5" y="181" width="9.3" height="9.8" fill="rgb(210,210,210)"/><rect x="1477.5" y="190.5" width="9.3" height="9.3" fill="rgb(184,184,184)"/><rect x="1477.5" y="199.5" width="9.3" height="2.3" fill="rgb(241,241,241)"/><rect x="1486.5" y="181" width="9.3" height="9.8" fill="rgb(216,216,216)"/><rect x="1486.5" y="190.5" width="9.3" height="9.3" fill="rgb(177,177,177)"/><rect x="1486.5" y="199.5" width="9.3" height="2.3" fill="rgb(242,242,242)"/><rect x="1495.5" y="181" width="9.3" height="9.8" fill="rgb(215,215,215)"/><rect x="1495.5" y="190.5" width="9.3" height="9.3" fill="rgb(170,170,170)"/><rect x="1495.5" y="199.5" width="9.3" height="2.3" fill="rgb(239,239,239)"/><rect x="1504.5" y="181" width="9.3" height="9.8" fill="rgb(214,214,214)"/><rect x="1504.5" y="190.5" width="9.3" height="9.3" fill="rgb(190,190,190)"/><rect x="1504.5" y="199.5" width="9.3" height="2.3" fill="rgb(242,242,242)"/><rect x="1513.5" y="181" width="9.3" height="9.8" fill="rgb(213,213,213)"/><rect x="1513.5" y="190.5" width="9.3" height="9.3" fill="rgb(142,142,142)"/><rect x="1513.5" y="199.5" width="9.3" height="2.3" fill="rgb(242,242,242)"/><rect x="1522.5" y="181" width="9.3" height="9.8" fill="rgb(210,210,210)"/><rect x="1522.5" y="190.5" width="9.3" height="9.3" fill="rgb(194,194,194)"/><rect x="1522.5" y="199.5" width="9.3" height="2.3" fill="rgb(241,241,241)"/><rect x="1531.5" y="181" width="9.3" height="9.8" fill="rgb(216,216,216)"/><rect x="1531.5" y="190.5" width="9.3" height="9.3" fill="rgb(179,179,179)"/><rect x="1531.5" y="199.5" width="9.3" height="2.3" fill="rgb(238,238,238)"/><rect x="1540.5" y="181" width="9.3" height="9.8" fill="rgb(202,202,202)"/><rect x="1540.5" y="190.5" width="9.3" height="9.3" fill="rgb(188,188,188)"/><rect x="1540.5" y="199.5" width="9.3" height="2.3" fill="rgb(239,239,239)"/><rect x="1549.5" y="181" width="9.3" height="9.8" fill="rgb(212,212,212)"/><rect x="1549.5" y="190.5" width="9.3" height="9.3" fill="rgb(149,149,149)"/><rect x="1549.5" y="199.5" width="9.3" height="2.3" fill="rgb(244,244,244)"/><rect x="1558.5" y="181" width="9.3" height="9.8" fill="rgb(202,202,202)"/><rect x="1558.5" y="190.5" width="9.3" height="9.3" fill="rgb(170,170,170)"/><rect x="1558.5" y="199.5" width="9.3" height="2.3" fill="rgb(238,238,238)"/><rect x="1567.5" y="181" width="9.3" height="9.8" fill="rgb(206,206,206)"/><rect x="1567.5" y="190.5" width="9.3" height="9.3" fill="rgb(176,176,176)"/><rect x="1567.5" y="199.5" width="9.3" height="2.3" fill="rgb(238,238,238)"/><rect x="1576.5" y="181" width="9.3" height="9.8" fill="rgb(215,215,215)"/><rect x="1576.5" y="190.5" width="9.3" height="9.3" fill="rgb(152,152,152)"/><rect x="1576.5" y="199.5" width="9.3" height="2.3" fill="rgb(244,244,244)"/><rect x="1585.5" y="181" width="9.3" height="9.8" fill="rgb(202,202,202)"/><rect x="1585.5" y="190.5" width="9.3" height="9.3" fill="rgb(188,188,188)"/><rect x="1585.5" y="199.5" width="9.3" height="2.3" fill="rgb(241,241,241)"/><rect x="1594.5" y="181" width="9.3" height="9.8" fill="rgb(208,208,208)"/><rect x="1594.5" y="190.5" width="9.3" height="9.3" fill="rgb(180,180,180)"/><rect x="1594.5" y="199.5" width="9.3" height="2.3" fill="rgb(239,239,239)"/><rect x="1603.5" y="181" width="9.3" height="9.8" fill="rgb(209,209,209)"/><rect x="1603.5" y="190.5" width="9.3" height="9.3" fill="rgb(140,140,140)"/><rect x="1603.5" y="199.5" width="9.3" height="2.3" fill="rgb(244,244,244)"/><rect x="1612.5" y="181" width="9.3" height="9.8" fill="rgb(203,203,203)"/><rect x="1612.5" y="190.5" width="9.3" height="9.3" fill="rgb(174,174,174)"/><rect x="1612.5" y="199.5" width="9.3" height="2.3" fill="rgb(241,241,241)"/><rect x="1621.5" y="181" width="9.3" height="9.8" fill="rgb(203,203,203)"/><rect x="1621.5" y="190.5" width="9.3" height="9.3" fill="rgb(170,170,170)"/><rect x="1621.5" y="199.5" width="9.3" height="2.3" fill="rgb(238,238,238)"/><rect x="1630.5" y="181" width="9.3" height="9.8" fill="rgb(214,214,214)"/><rect x="1630.5" y="190.5" width="9.3" height="9.3" fill="rgb(155,155,155)"/><rect x="1630.5" y="199.5" width="9.3" height="2.3" fill="rgb(240,240,240)"/><rect x="1639.5" y="181" width="9.3" height="9.8" fill="rgb(217,217,217)"/><rect x="1639.5" y="190.5" width="9.3" height="9.3" fill="rgb(176,176,176)"/><rect x="1639.5" y="199.5" width="9.3" height="2.3" fill="rgb(245,245,245)"/><rect x="1648.5" y="181" width="9.3" height="9.8" fill="rgb(216,216,216)"/><rect x="1648.5" y="190.5" width="9.3" height="9.3" fill="rgb(176,176,176)"/><rect x="1648.5" y="199.5" width="9.3" height="2.3" fill="rgb(240,240,240)"/><rect x="1657.5" y="181" width="9.3" height="9.8" fill="rgb(213,213,213)"/><rect x="1657.5" y="190.5" width="9.3" height="9.3" fill="rgb(190,190,190)"/><rect x="1657.5" y="199.5" width="9.3" height="2.3" fill="rgb(244,244,244)"/><rect x="1666.5" y="181" width="9.3" height="9.8" fill="rgb(203,203,203)"/><rect x="1666.5" y="190.5" width="9.3" height="9.3" fill="rgb(153,153,153)"/><rect x="1666.5" y="199.5" width="9.3" height="2.3" fill="rgb(241,241,241)"/><rect x="1675.5" y="181" width="9.3" height="9.8" fill="rgb(200,200,200)"/><rect x="1675.5" y="190.5" width="9.3" height="9.3" fill="rgb(178,178,178)"/><rect x="1675.5" y="199.5" width="9.3" height="2.3" fill="rgb(242,242,242)"/><rect x="1684.5" y="181" width="9.3" height="9.8" fill="rgb(244,244,244)"/><rect x="1684.5" y="190.5" width="9.3" height="9.3" fill="rgb(239,239,239)"/><rect x="1684.5" y="199.5" width="9.3" height="2.3" fill="rgb(250,250,250)"/><rect x="1693.5" y="181" width="6.8" height="9.8" fill="rgb(246,246,246)"/><rect x="1693.5" y="190.5" width="6.8" height="9.3" fill="rgb(243,243,243)"/><rect x="1693.5" y="199.5" width="6.8" height="2.3" fill="rgb(250,250,250)"/><rect x="1696.0" y="181" width="9.3" height="9.8" fill="rgb(180,180,180)"/><rect x="1696.0" y="190.5" width="9.3" height="9.3" fill="rgb(177,177,177)"/><rect x="1705.0" y="181" width="9.3" height="9.8" fill="rgb(193,193,193)"/><rect x="1705.0" y="190.5" width="9.3" height="9.3" fill="rgb(189,189,189)"/><rect x="1714.0" y="181" width="9.3" height="9.8" fill="rgb(177,177,177)"/><rect x="1714.0" y="190.5" width="9.3" height="9.3" fill="rgb(188,188,188)"/><rect x="1723.0" y="181" width="9.3" height="9.8" fill="rgb(179,179,179)"/><rect x="1723.0" y="190.5" width="9.3" height="9.3" fill="rgb(189,189,189)"/><rect x="1732.0" y="181" width="9.3" height="9.8" fill="rgb(176,176,176)"/><rect x="1732.0" y="190.5" width="9.3" height="9.3" fill="rgb(175,175,175)"/><rect x="1741.0" y="181" width="6.8" height="9.8" fill="rgb(192,192,192)"/><rect x="1741.0" y="190.5" width="6.8" height="9.3" fill="rgb(173,173,173)"/></svg>

<!-- panes -->
<div class="pane" style="left:0;top:216px;width:1107px;height:985px;border-top:2.5px solid #0d0d0d"></div>
<div class="pane" style="left:1117px;top:216px;width:1280px;height:985px;border-top:2.5px solid #0d0d0d"></div>
<div class="abs" style="left:0;top:252px;width:1107px;height:1px;background:#e4e4e4"></div>
<div class="abs" style="left:1118px;top:252px;width:1279px;height:1px;background:#e4e4e4"></div>

<div class="sep" style="left:-2px;top:226px"></div>
<div class="hdr" style="left:7.3999999999999995px;top:223px;letter-spacing:0.24px">Filename</div>
<svg class="abs" style="left:112px;top:226px" width="28" height="18" viewBox="0 0 28 18"><path d="M2.6 15.2 L13.8 4.2 L25 15.2" fill="none" stroke="#474747" stroke-width="4.2" stroke-linejoin="miter"/></svg>
<div class="sep" style="left:338.4px;top:226px"></div>
<div class="hdr" style="left:190.8px;width:300px;text-align:right;top:223px;letter-spacing:0.44px;margin-right:-0.44px">Filesize</div>
<div class="sep" style="left:498px;top:226px"></div>
<div class="hdr" style="left:507.4px;top:223px;letter-spacing:0.57px">Filetype</div>
<div class="sep" style="left:737.5px;top:226px"></div>
<div class="hdr" style="left:746.9000000000001px;top:223px;letter-spacing:0.71px">Last modified</div>
<div class="sep" style="left:977.5px;top:226px"></div>
<div class="sep" style="left:1116.5px;top:226px"></div>
<div class="hdr" style="left:1125.2px;top:223px;letter-spacing:0.24px">Filename</div>
<svg class="abs" style="left:1230px;top:226px" width="28" height="18" viewBox="0 0 28 18"><path d="M2.6 15.2 L13.8 4.2 L25 15.2" fill="none" stroke="#474747" stroke-width="4.2" stroke-linejoin="miter"/></svg>
<div class="sep" style="left:1416.25px;top:226px"></div>
<div class="hdr" style="left:1258.25px;width:300px;text-align:right;top:223px;letter-spacing:0.44px;margin-right:-0.44px">Filesize</div>
<div class="sep" style="left:1565.5px;top:226px"></div>
<div class="hdr" style="left:1574.95px;top:223px;letter-spacing:0.57px">Filetype</div>
<div class="sep" style="left:1726.25px;top:226px"></div>
<div class="hdr" style="left:1735.2px;top:223px;letter-spacing:0.71px">Last modified</div>
<div class="sep" style="left:1925.75px;top:226px"></div>
<div class="hdr" style="left:1934.95px;top:223px;letter-spacing:0.41px">Permissions</div>
<div class="sep" style="left:2085.75px;top:226px"></div>
<div class="hdr" style="left:2094.95px;top:223px;letter-spacing:0.355px">Owner/Group</div>
<div class="sep" style="left:2255.5px;top:226px"></div>

<svg class="ic" style="left:3px;top:258px" width="32" height="30" viewBox="0 0 32 30"><path d="M1.2 3.2 Q1.2 1.2 3.2 1.2 L11.4 1.2 Q12.5 1.2 13.2 2 L14 3 Q14.5 3.6 15.4 3.6 L27.4 3.6 Q29.2 3.6 29.2 5.4 L29.2 25.4 Q29.2 27.2 27.4 27.2 L3 27.2 Q1.2 27.2 1.2 25.4 Z" fill="#eba80d"/><path d="M1.2 7.4 Q1.2 5.8 3 5.8 L27.4 5.8 Q29.2 5.8 29.2 7.4 L29.2 25.4 Q29.2 27.2 27.4 27.2 L3 27.2 Q1.2 27.2 1.2 25.4 Z" fill="url(#fg)"/></svg>
<div class="c" style="left:46px;top:254px">.vol</div>
<div class="c" style="left:503px;top:254px;letter-spacing:0.75px">Directory</div>
<div class="c" style="left:742.7px;top:254px;letter-spacing:0.36px">18/10/2021 04:3...</div>
<svg class="ic" style="left:3px;top:298px" width="32" height="30" viewBox="0 0 32 30"><path d="M1.2 3.2 Q1.2 1.2 3.2 1.2 L11.4 1.2 Q12.5 1.2 13.2 2 L14 3 Q14.5 3.6 15.4 3.6 L27.4 3.6 Q29.2 3.6 29.2 5.4 L29.2 25.4 Q29.2 27.2 27.4 27.2 L3 27.2 Q1.2 27.2 1.2 25.4 Z" fill="#eba80d"/><path d="M1.2 7.4 Q1.2 5.8 3 5.8 L27.4 5.8 Q29.2 5.8 29.2 7.4 L29.2 25.4 Q29.2 27.2 27.4 27.2 L3 27.2 Q1.2 27.2 1.2 25.4 Z" fill="url(#fg)"/></svg>
<div class="c" style="left:46px;top:294px">Applications</div>
<div class="c" style="left:503px;top:294px;letter-spacing:0.75px">Directory</div>
<div class="c" style="left:742.7px;top:294px;letter-spacing:0.36px">26/07/2023 08:...</div>
<svg class="ic" style="left:3px;top:338px" width="32" height="30" viewBox="0 0 32 30"><path d="M1.2 3.2 Q1.2 1.2 3.2 1.2 L11.4 1.2 Q12.5 1.2 13.2 2 L14 3 Q14.5 3.6 15.4 3.6 L27.4 3.6 Q29.2 3.6 29.2 5.4 L29.2 25.4 Q29.2 27.2 27.4 27.2 L3 27.2 Q1.2 27.2 1.2 25.4 Z" fill="#eba80d"/><path d="M1.2 7.4 Q1.2 5.8 3 5.8 L27.4 5.8 Q29.2 5.8 29.2 7.4 L29.2 25.4 Q29.2 27.2 27.4 27.2 L3 27.2 Q1.2 27.2 1.2 25.4 Z" fill="url(#fg)"/></svg>
<div class="c" style="left:46px;top:334px">Library</div>
<div class="c" style="left:503px;top:334px;letter-spacing:0.75px">Directory</div>
<div class="c" style="left:742.7px;top:334px;letter-spacing:0.36px">14/11/2022 21:3...</div>
<svg class="ic" style="left:3px;top:378px" width="32" height="30" viewBox="0 0 32 30"><path d="M1.2 3.2 Q1.2 1.2 3.2 1.2 L11.4 1.2 Q12.5 1.2 13.2 2 L14 3 Q14.5 3.6 15.4 3.6 L27.4 3.6 Q29.2 3.6 29.2 5.4 L29.2 25.4 Q29.2 27.2 27.4 27.2 L3 27.2 Q1.2 27.2 1.2 25.4 Z" fill="#eba80d"/><path d="M1.2 7.4 Q1.2 5.8 3 5.8 L27.4 5.8 Q29.2 5.8 29.2 7.4 L29.2 25.4 Q29.2 27.2 27.4 27.2 L3 27.2 Q1.2 27.2 1.2 25.4 Z" fill="url(#fg)"/></svg>
<div class="c" style="left:46px;top:374px">System</div>
<div class="c" style="left:503px;top:374px;letter-spacing:0.75px">Directory</div>
<div class="c" style="left:742.7px;top:374px;letter-spacing:0.36px">18/10/2021 04:3...</div>
<svg class="ic" style="left:3px;top:418px" width="32" height="30" viewBox="0 0 32 30"><path d="M1.2 3.2 Q1.2 1.2 3.2 1.2 L11.4 1.2 Q12.5 1.2 13.2 2 L14 3 Q14.5 3.6 15.4 3.6 L27.4 3.6 Q29.2 3.6 29.2 5.4 L29.2 25.4 Q29.2 27.2 27.4 27.2 L3 27.2 Q1.2 27.2 1.2 25.4 Z" fill="#eba80d"/><path d="M1.2 7.4 Q1.2 5.8 3 5.8 L27.4 5.8 Q29.2 5.8 29.2 7.4 L29.2 25.4 Q29.2 27.2 27.4 27.2 L3 27.2 Q1.2 27.2 1.2 25.4 Z" fill="url(#fg)"/></svg>
<div class="c" style="left:46px;top:414px">Users</div>
<div class="c" style="left:503px;top:414px;letter-spacing:0.75px">Directory</div>
<div class="c" style="left:742.7px;top:414px;letter-spacing:0.36px">25/12/2021 12:2...</div>
<svg class="ic" style="left:3px;top:458px" width="32" height="30" viewBox="0 0 32 30"><path d="M1.2 3.2 Q1.2 1.2 3.2 1.2 L11.4 1.2 Q12.5 1.2 13.2 2 L14 3 Q14.5 3.6 15.4 3.6 L27.4 3.6 Q29.2 3.6 29.2 5.4 L29.2 25.4 Q29.2 27.2 27.4 27.2 L3 27.2 Q1.2 27.2 1.2 25.4 Z" fill="#eba80d"/><path d="M1.2 7.4 Q1.2 5.8 3 5.8 L27.4 5.8 Q29.2 5.8 29.2 7.4 L29.2 25.4 Q29.2 27.2 27.4 27.2 L3 27.2 Q1.2 27.2 1.2 25.4 Z" fill="url(#fg)"/></svg>
<div class="c" style="left:46px;top:454px">Volumes</div>
<div class="c" style="left:503px;top:454px;letter-spacing:0.75px">Directory</div>
<div class="c" style="left:742.7px;top:454px;letter-spacing:0.36px">26/07/2023 08:...</div>
<svg class="ic" style="left:3px;top:498px" width="32" height="30" viewBox="0 0 32 30"><path d="M1.2 3.2 Q1.2 1.2 3.2 1.2 L11.4 1.2 Q12.5 1.2 13.2 2 L14 3 Q14.5 3.6 15.4 3.6 L27.4 3.6 Q29.2 3.6 29.2 5.4 L29.2 25.4 Q29.2 27.2 27.4 27.2 L3 27.2 Q1.2 27.2 1.2 25.4 Z" fill="#eba80d"/><path d="M1.2 7.4 Q1.2 5.8 3 5.8 L27.4 5.8 Q29.2 5.8 29.2 7.4 L29.2 25.4 Q29.2 27.2 27.4 27.2 L3 27.2 Q1.2 27.2 1.2 25.4 Z" fill="url(#fg)"/></svg>
<div class="c" style="left:46px;top:494px">bin</div>
<div class="c" style="left:503px;top:494px;letter-spacing:0.75px">Directory</div>
<div class="c" style="left:742.7px;top:494px;letter-spacing:0.36px">18/10/2021 04:3...</div>
<svg class="ic" style="left:3px;top:538px" width="32" height="30" viewBox="0 0 32 30"><path d="M1.2 3.2 Q1.2 1.2 3.2 1.2 L11.4 1.2 Q12.5 1.2 13.2 2 L14 3 Q14.5 3.6 15.4 3.6 L27.4 3.6 Q29.2 3.6 29.2 5.4 L29.2 25.4 Q29.2 27.2 27.4 27.2 L3 27.2 Q1.2 27.2 1.2 25.4 Z" fill="#eba80d"/><path d="M1.2 7.4 Q1.2 5.8 3 5.8 L27.4 5.8 Q29.2 5.8 29.2 7.4 L29.2 25.4 Q29.2 27.2 27.4 27.2 L3 27.2 Q1.2 27.2 1.2 25.4 Z" fill="url(#fg)"/></svg>
<div class="c" style="left:46px;top:534px">cores</div>
<div class="c" style="left:503px;top:534px;letter-spacing:0.75px">Directory</div>
<div class="c" style="left:742.7px;top:534px;letter-spacing:0.36px">18/10/2021 03:3...</div>
<svg class="ic" style="left:3px;top:578px" width="32" height="30" viewBox="0 0 32 30"><path d="M1.2 3.2 Q1.2 1.2 3.2 1.2 L11.4 1.2 Q12.5 1.2 13.2 2 L14 3 Q14.5 3.6 15.4 3.6 L27.4 3.6 Q29.2 3.6 29.2 5.4 L29.2 25.4 Q29.2 27.2 27.4 27.2 L3 27.2 Q1.2 27.2 1.2 25.4 Z" fill="#eba80d"/><path d="M1.2 7.4 Q1.2 5.8 3 5.8 L27.4 5.8 Q29.2 5.8 29.2 7.4 L29.2 25.4 Q29.2 27.2 27.4 27.2 L3 27.2 Q1.2 27.2 1.2 25.4 Z" fill="url(#fg)"/></svg>
<div class="c" style="left:46px;top:574px">dev</div>
<div class="c" style="left:503px;top:574px;letter-spacing:0.75px">Directory</div>
<div class="c" style="left:742.7px;top:574px;letter-spacing:0.36px">12/05/2023 08:0...</div>
<svg class="ic" style="left:3px;top:618px" width="32" height="30" viewBox="0 0 32 30"><path d="M1.2 3.2 Q1.2 1.2 3.2 1.2 L11.4 1.2 Q12.5 1.2 13.2 2 L14 3 Q14.5 3.6 15.4 3.6 L27.4 3.6 Q29.2 3.6 29.2 5.4 L29.2 25.4 Q29.2 27.2 27.4 27.2 L3 27.2 Q1.2 27.2 1.2 25.4 Z" fill="#eba80d"/><path d="M1.2 7.4 Q1.2 5.8 3 5.8 L27.4 5.8 Q29.2 5.8 29.2 7.4 L29.2 25.4 Q29.2 27.2 27.4 27.2 L3 27.2 Q1.2 27.2 1.2 25.4 Z" fill="url(#fg)"/></svg>
<div class="c" style="left:46px;top:614px">etc</div>
<div class="c" style="left:503px;top:614px;letter-spacing:0.75px">Directory</div>
<div class="c" style="left:742.7px;top:614px;letter-spacing:0.36px">21/03/2022 13:3...</div>
<svg class="ic" style="left:3px;top:658px" width="32" height="30" viewBox="0 0 32 30"><path d="M1.2 3.2 Q1.2 1.2 3.2 1.2 L11.4 1.2 Q12.5 1.2 13.2 2 L14 3 Q14.5 3.6 15.4 3.6 L27.4 3.6 Q29.2 3.6 29.2 5.4 L29.2 25.4 Q29.2 27.2 27.4 27.2 L3 27.2 Q1.2 27.2 1.2 25.4 Z" fill="#eba80d"/><path d="M1.2 7.4 Q1.2 5.8 3 5.8 L27.4 5.8 Q29.2 5.8 29.2 7.4 L29.2 25.4 Q29.2 27.2 27.4 27.2 L3 27.2 Q1.2 27.2 1.2 25.4 Z" fill="url(#fg)"/></svg>
<div class="c" style="left:46px;top:654px">home</div>
<div class="c" style="left:503px;top:654px;letter-spacing:0.75px">Directory</div>
<div class="c" style="left:742.7px;top:654px;letter-spacing:0.36px">12/05/2023 08:...</div>
<svg class="ic" style="left:3px;top:698px" width="32" height="30" viewBox="0 0 32 30"><path d="M1.2 3.2 Q1.2 1.2 3.2 1.2 L11.4 1.2 Q12.5 1.2 13.2 2 L14 3 Q14.5 3.6 15.4 3.6 L27.4 3.6 Q29.2 3.6 29.2 5.4 L29.2 25.4 Q29.2 27.2 27.4 27.2 L3 27.2 Q1.2 27.2 1.2 25.4 Z" fill="#eba80d"/><path d="M1.2 7.4 Q1.2 5.8 3 5.8 L27.4 5.8 Q29.2 5.8 29.2 7.4 L29.2 25.4 Q29.2 27.2 27.4 27.2 L3 27.2 Q1.2 27.2 1.2 25.4 Z" fill="url(#fg)"/></svg>
<div class="c" style="left:46px;top:694px">opt</div>
<div class="c" style="left:503px;top:694px;letter-spacing:0.75px">Directory</div>
<div class="c" style="left:742.7px;top:694px;letter-spacing:0.36px">18/10/2021 03:3...</div>
<svg class="ic" style="left:3px;top:738px" width="32" height="30" viewBox="0 0 32 30"><path d="M1.2 3.2 Q1.2 1.2 3.2 1.2 L11.4 1.2 Q12.5 1.2 13.2 2 L14 3 Q14.5 3.6 15.4 3.6 L27.4 3.6 Q29.2 3.6 29.2 5.4 L29.2 25.4 Q29.2 27.2 27.4 27.2 L3 27.2 Q1.2 27.2 1.2 25.4 Z" fill="#eba80d"/><path d="M1.2 7.4 Q1.2 5.8 3 5.8 L27.4 5.8 Q29.2 5.8 29.2 7.4 L29.2 25.4 Q29.2 27.2 27.4 27.2 L3 27.2 Q1.2 27.2 1.2 25.4 Z" fill="url(#fg)"/></svg>
<div class="c" style="left:46px;top:734px">private</div>
<div class="c" style="left:503px;top:734px;letter-spacing:0.75px">Directory</div>
<div class="c" style="left:742.7px;top:734px;letter-spacing:0.36px">18/10/2021 04:2...</div>
<svg class="ic" style="left:3px;top:778px" width="32" height="30" viewBox="0 0 32 30"><path d="M1.2 3.2 Q1.2 1.2 3.2 1.2 L11.4 1.2 Q12.5 1.2 13.2 2 L14 3 Q14.5 3.6 15.4 3.6 L27.4 3.6 Q29.2 3.6 29.2 5.4 L29.2 25.4 Q29.2 27.2 27.4 27.2 L3 27.2 Q1.2 27.2 1.2 25.4 Z" fill="#eba80d"/><path d="M1.2 7.4 Q1.2 5.8 3 5.8 L27.4 5.8 Q29.2 5.8 29.2 7.4 L29.2 25.4 Q29.2 27.2 27.4 27.2 L3 27.2 Q1.2 27.2 1.2 25.4 Z" fill="url(#fg)"/></svg>
<div class="c" style="left:46px;top:774px">sbin</div>
<div class="c" style="left:503px;top:774px;letter-spacing:0.75px">Directory</div>
<div class="c" style="left:742.7px;top:774px;letter-spacing:0.36px">18/10/2021 04:3...</div>
<svg class="ic" style="left:3px;top:818px" width="32" height="30" viewBox="0 0 32 30"><path d="M1.2 3.2 Q1.2 1.2 3.2 1.2 L11.4 1.2 Q12.5 1.2 13.2 2 L14 3 Q14.5 3.6 15.4 3.6 L27.4 3.6 Q29.2 3.6 29.2 5.4 L29.2 25.4 Q29.2 27.2 27.4 27.2 L3 27.2 Q1.2 27.2 1.2 25.4 Z" fill="#eba80d"/><path d="M1.2 7.4 Q1.2 5.8 3 5.8 L27.4 5.8 Q29.2 5.8 29.2 7.4 L29.2 25.4 Q29.2 27.2 27.4 27.2 L3 27.2 Q1.2 27.2 1.2 25.4 Z" fill="url(#fg)"/></svg>
<div class="c" style="left:46px;top:814px">tmp</div>
<div class="c" style="left:503px;top:814px;letter-spacing:0.75px">Directory</div>
<div class="c" style="left:742.7px;top:814px;letter-spacing:0.36px">27/07/2023 09:4...</div>
<svg class="ic" style="left:3px;top:858px" width="32" height="30" viewBox="0 0 32 30"><path d="M1.2 3.2 Q1.2 1.2 3.2 1.2 L11.4 1.2 Q12.5 1.2 13.2 2 L14 3 Q14.5 3.6 15.4 3.6 L27.4 3.6 Q29.2 3.6 29.2 5.4 L29.2 25.4 Q29.2 27.2 27.4 27.2 L3 27.2 Q1.2 27.2 1.2 25.4 Z" fill="#eba80d"/><path d="M1.2 7.4 Q1.2 5.8 3 5.8 L27.4 5.8 Q29.2 5.8 29.2 7.4 L29.2 25.4 Q29.2 27.2 27.4 27.2 L3 27.2 Q1.2 27.2 1.2 25.4 Z" fill="url(#fg)"/></svg>
<div class="c" style="left:46px;top:854px">usr</div>
<div class="c" style="left:503px;top:854px;letter-spacing:0.75px">Directory</div>
<div class="c" style="left:742.7px;top:854px;letter-spacing:0.36px">18/10/2021 04:3...</div>
<svg class="ic" style="left:3px;top:898px" width="32" height="30" viewBox="0 0 32 30"><path d="M1.2 3.2 Q1.2 1.2 3.2 1.2 L11.4 1.2 Q12.5 1.2 13.2 2 L14 3 Q14.5 3.6 15.4 3.6 L27.4 3.6 Q29.2 3.6 29.2 5.4 L29.2 25.4 Q29.2 27.2 27.4 27.2 L3 27.2 Q1.2 27.2 1.2 25.4 Z" fill="#eba80d"/><path d="M1.2 7.4 Q1.2 5.8 3 5.8 L27.4 5.8 Q29.2 5.8 29.2 7.4 L29.2 25.4 Q29.2 27.2 27.4 27.2 L3 27.2 Q1.2 27.2 1.2 25.4 Z" fill="url(#fg)"/></svg>
<div class="c" style="left:46px;top:894px">var</div>
<div class="c" style="left:503px;top:894px;letter-spacing:0.75px">Directory</div>
<div class="c" style="left:742.7px;top:894px;letter-spacing:0.36px">25/12/2021 12:3...</div>
<svg class="ic" style="left:6.5px;top:936px" width="30" height="36" viewBox="0 0 30 36"><path d="M3 3 L19 3 L26.5 10 L26.5 33.5 L3 33.5 Z" fill="#efefef"/><path d="M1.500 1.200 L17.5 1.2 L24.5 8 L24.5 31.6 L1.5 31.600 Z" fill="#fff" stroke="#e9e9e9" stroke-width="1.3"/><path d="M17.5 1.2 L17.5 8 L24.5 8" fill="#f4f4f4" stroke="#e6e6e6" stroke-width="1.2"/></svg>
<div class="c" style="left:46px;top:934px">.VolumeIcon.icns</div>
<div class="c" style="left:503px;top:934px;letter-spacing:0.75px">icns<i>-</i>file</div>
<svg class="ic" style="left:6.5px;top:976px" width="30" height="36" viewBox="0 0 30 36"><path d="M3 3 L19 3 L26.5 10 L26.5 33.5 L3 33.5 Z" fill="#efefef"/><path d="M1.500 1.200 L17.5 1.2 L24.5 8 L24.5 31.6 L1.5 31.600 Z" fill="#fff" stroke="#e9e9e9" stroke-width="1.3"/><path d="M17.5 1.2 L17.5 8 L24.5 8" fill="#f4f4f4" stroke="#e6e6e6" stroke-width="1.2"/></svg>
<div class="c" style="left:46px;top:974px">.file</div>
<div class="c r" style="left:287px;width:200px;top:974px">0</div>
<div class="c" style="left:503px;top:974px;letter-spacing:0.75px">File</div>
<div class="c" style="left:742.7px;top:974px;letter-spacing:0.36px">18/10/2021 04:3...</div>
<svg class="ic" style="left:1121px;top:258px" width="32" height="30" viewBox="0 0 32 30"><path d="M1.2 3.2 Q1.2 1.2 3.2 1.2 L11.4 1.2 Q12.5 1.2 13.2 2 L14 3 Q14.5 3.6 15.4 3.6 L27.4 3.6 Q29.2 3.6 29.2 5.4 L29.2 25.4 Q29.2 27.2 27.4 27.2 L3 27.2 Q1.2 27.2 1.2 25.4 Z" fill="#eba80d"/><path d="M1.2 7.4 Q1.2 5.8 3 5.8 L27.4 5.8 Q29.2 5.8 29.2 7.4 L29.2 25.4 Q29.2 27.2 27.4 27.2 L3 27.2 Q1.2 27.2 1.2 25.4 Z" fill="url(#fg)"/></svg>
<div class="c" style="left:1164px;top:254px">..</div>
<svg class="ic" style="left:1121px;top:298px" width="32" height="30" viewBox="0 0 32 30"><path d="M1.2 3.2 Q1.2 1.2 3.2 1.2 L11.4 1.2 Q12.5 1.2 13.2 2 L14 3 Q14.5 3.6 15.4 3.6 L27.4 3.6 Q29.2 3.6 29.2 5.4 L29.2 25.4 Q29.2 27.2 27.4 27.2 L3 27.2 Q1.2 27.2 1.2 25.4 Z" fill="#eba80d"/><path d="M1.2 7.4 Q1.2 5.8 3 5.8 L27.4 5.8 Q29.2 5.8 29.2 7.4 L29.2 25.4 Q29.2 27.2 27.4 27.2 L3 27.2 Q1.2 27.2 1.2 25.4 Z" fill="url(#fg)"/></svg>
<div class="c" style="left:1164px;top:294px">.ansible</div>
<div class="c" style="left:1571px;top:294px;letter-spacing:0.75px">Directory</div>
<div class="c" style="left:1730.7px;top:294px;letter-spacing:0.36px">23/11/2020 1...</div>
<div class="c" style="left:1931.5px;top:294px;letter-spacing:0.45px">drwxr<i>-</i>xr<i>-</i>x</div>
<div class="c" style="left:2092px;top:294px;letter-spacing:0.81px">wordcandy...</div>
<svg class="ic" style="left:1121px;top:338px" width="32" height="30" viewBox="0 0 32 30"><path d="M1.2 3.2 Q1.2 1.2 3.2 1.2 L11.4 1.2 Q12.5 1.2 13.2 2 L14 3 Q14.5 3.6 15.4 3.6 L27.4 3.6 Q29.2 3.6 29.2 5.4 L29.2 25.4 Q29.2 27.2 27.4 27.2 L3 27.2 Q1.2 27.2 1.2 25.4 Z" fill="#eba80d"/><path d="M1.2 7.4 Q1.2 5.8 3 5.8 L27.4 5.8 Q29.2 5.8 29.2 7.4 L29.2 25.4 Q29.2 27.2 27.4 27.2 L3 27.2 Q1.2 27.2 1.2 25.4 Z" fill="url(#fg)"/></svg>
<div class="c" style="left:1164px;top:334px">.ansible_async</div>
<div class="c" style="left:1571px;top:334px;letter-spacing:0.75px">Directory</div>
<div class="c" style="left:1730.7px;top:334px;letter-spacing:0.36px">27/03/2023 2...</div>
<div class="c" style="left:1931.5px;top:334px;letter-spacing:0.45px">drwxr<i>-</i>xr<i>-</i>x</div>
<div class="c" style="left:2092px;top:334px;letter-spacing:0.81px">wordcandy...</div>
<svg class="ic" style="left:1121px;top:378px" width="32" height="30" viewBox="0 0 32 30"><path d="M1.2 3.2 Q1.2 1.2 3.2 1.2 L11.4 1.2 Q12.5 1.2 13.2 2 L14 3 Q14.5 3.6 15.4 3.6 L27.4 3.6 Q29.2 3.6 29.2 5.4 L29.2 25.4 Q29.2 27.2 27.4 27.2 L3 27.2 Q1.2 27.2 1.2 25.4 Z" fill="#eba80d"/><path d="M1.2 7.4 Q1.2 5.8 3 5.8 L27.4 5.8 Q29.2 5.8 29.2 7.4 L29.2 25.4 Q29.2 27.2 27.4 27.2 L3 27.2 Q1.2 27.2 1.2 25.4 Z" fill="url(#fg)"/></svg>
<div class="c" style="left:1164px;top:374px">.cache</div>
<div class="c" style="left:1571px;top:374px;letter-spacing:0.75px">Directory</div>
<div class="c" style="left:1730.7px;top:374px;letter-spacing:0.36px">20/06/2022 1...</div>
<div class="c" style="left:1931.5px;top:374px;letter-spacing:0.45px">drwx<i>-</i><i>-</i><i>-</i><i>-</i><i>-</i><i>-</i></div>
<div class="c" style="left:2092px;top:374px;letter-spacing:0.81px">wordcandy...</div>
<svg class="ic" style="left:1121px;top:418px" width="32" height="30" viewBox="0 0 32 30"><path d="M1.2 3.2 Q1.2 1.2 3.2 1.2 L11.4 1.2 Q12.5 1.2 13.2 2 L14 3 Q14.5 3.6 15.4 3.6 L27.4 3.6 Q29.2 3.6 29.2 5.4 L29.2 25.4 Q29.2 27.2 27.4 27.2 L3 27.2 Q1.2 27.2 1.2 25.4 Z" fill="#eba80d"/><path d="M1.2 7.4 Q1.2 5.8 3 5.8 L27.4 5.8 Q29.2 5.8 29.2 7.4 L29.2 25.4 Q29.2 27.2 27.4 27.2 L3 27.2 Q1.2 27.2 1.2 25.4 Z" fill="url(#fg)"/></svg>
<div class="c" style="left:1164px;top:414px">.ssh</div>
<div class="c" style="left:1571px;top:414px;letter-spacing:0.75px">Directory</div>
<div class="c" style="left:1730.7px;top:414px;letter-spacing:0.36px">23/05/2023 1...</div>
<div class="c" style="left:1931.5px;top:414px;letter-spacing:0.45px">drwx<i>-</i><i>-</i><i>-</i><i>-</i><i>-</i><i>-</i></div>
<div class="c" style="left:2092px;top:414px;letter-spacing:0.81px">wordcandy...</div>
<svg class="ic" style="left:1121px;top:458px" width="32" height="30" viewBox="0 0 32 30"><path d="M1.2 3.2 Q1.2 1.2 3.2 1.2 L11.4 1.2 Q12.5 1.2 13.2 2 L14 3 Q14.5 3.6 15.4 3.6 L27.4 3.6 Q29.2 3.6 29.2 5.4 L29.2 25.4 Q29.2 27.2 27.4 27.2 L3 27.2 Q1.2 27.2 1.2 25.4 Z" fill="#eba80d"/><path d="M1.2 7.4 Q1.2 5.8 3 5.8 L27.4 5.8 Q29.2 5.8 29.2 7.4 L29.2 25.4 Q29.2 27.2 27.4 27.2 L3 27.2 Q1.2 27.2 1.2 25.4 Z" fill="url(#fg)"/></svg>
<div class="c" style="left:1164px;top:454px">.wp<i>-</i>cli</div>
<div class="c" style="left:1571px;top:454px;letter-spacing:0.75px">Directory</div>
<div class="c" style="left:1730.7px;top:454px;letter-spacing:0.36px">23/11/2020 1...</div>
<div class="c" style="left:1931.5px;top:454px;letter-spacing:0.45px">drwxr<i>-</i>xr<i>-</i>x</div>
<div class="c" style="left:2092px;top:454px;letter-spacing:0.81px">wordcandy...</div>
<svg class="ic" style="left:1121px;top:498px" width="32" height="30" viewBox="0 0 32 30"><path d="M1.2 3.2 Q1.2 1.2 3.2 1.2 L11.4 1.2 Q12.5 1.2 13.2 2 L14 3 Q14.5 3.6 15.4 3.6 L27.4 3.6 Q29.2 3.6 29.2 5.4 L29.2 25.4 Q29.2 27.2 27.4 27.2 L3 27.2 Q1.2 27.2 1.2 25.4 Z" fill="#eba80d"/><path d="M1.2 7.4 Q1.2 5.8 3 5.8 L27.4 5.8 Q29.2 5.8 29.2 7.4 L29.2 25.4 Q29.2 27.2 27.4 27.2 L3 27.2 Q1.2 27.2 1.2 25.4 Z" fill="url(#fg)"/></svg>
<div class="c" style="left:1164px;top:494px">logs</div>
<div class="c" style="left:1571px;top:494px;letter-spacing:0.75px">Directory</div>
<div class="c" style="left:1730.7px;top:494px;letter-spacing:0.36px">27/07/2023 0...</div>
<div class="c" style="left:1931.5px;top:494px;letter-spacing:0.45px">drwxr<i>-</i>xr<i>-</i>x</div>
<div class="c" style="left:2092px;top:494px;letter-spacing:0.81px">wordcandy...</div>
<svg class="ic" style="left:1121px;top:538px" width="32" height="30" viewBox="0 0 32 30"><path d="M1.2 3.2 Q1.2 1.2 3.2 1.2 L11.4 1.2 Q12.5 1.2 13.2 2 L14 3 Q14.5 3.6 15.4 3.6 L27.4 3.6 Q29.2 3.6 29.2 5.4 L29.2 25.4 Q29.2 27.2 27.4 27.2 L3 27.2 Q1.2 27.2 1.2 25.4 Z" fill="#eba80d"/><path d="M1.2 7.4 Q1.2 5.8 3 5.8 L27.4 5.8 Q29.2 5.8 29.2 7.4 L29.2 25.4 Q29.2 27.2 27.4 27.2 L3 27.2 Q1.2 27.2 1.2 25.4 Z" fill="url(#fg)"/></svg>
<div class="c" style="left:1164px;top:534px">mysqleditor</div>
<div class="c" style="left:1571px;top:534px;letter-spacing:0.75px">Directory</div>
<div class="c" style="left:1730.7px;top:534px;letter-spacing:0.36px">14/11/2022 1...</div>
<div class="c" style="left:1931.5px;top:534px;letter-spacing:0.45px">drwxr<i>-</i>xr<i>-</i>x</div>
<div class="c" style="left:2092px;top:534px;letter-spacing:0.81px">wordcandy...</div>
<svg class="ic" style="left:1121px;top:578px" width="32" height="30" viewBox="0 0 32 30"><path d="M1.2 3.2 Q1.2 1.2 3.2 1.2 L11.4 1.2 Q12.5 1.2 13.2 2 L14 3 Q14.5 3.6 15.4 3.6 L27.4 3.6 Q29.2 3.6 29.2 5.4 L29.2 25.4 Q29.2 27.2 27.4 27.2 L3 27.2 Q1.2 27.2 1.2 25.4 Z" fill="#eba80d"/><path d="M1.2 7.4 Q1.2 5.8 3 5.8 L27.4 5.8 Q29.2 5.8 29.2 7.4 L29.2 25.4 Q29.2 27.2 27.4 27.2 L3 27.2 Q1.2 27.2 1.2 25.4 Z" fill="url(#fg)"/></svg>
<div class="c" style="left:1164px;top:574px">private</div>
<div class="c" style="left:1571px;top:574px;letter-spacing:0.75px">Directory</div>
<div class="c" style="left:1730.7px;top:574px;letter-spacing:0.36px">27/03/2023 2...</div>
<div class="c" style="left:1931.5px;top:574px;letter-spacing:0.45px">drwxr<i>-</i>xr<i>-</i>x</div>
<div class="c" style="left:2092px;top:574px;letter-spacing:0.81px">wordcandy...</div>
<svg class="ic" style="left:1121px;top:618px" width="32" height="30" viewBox="0 0 32 30"><path d="M1.2 3.2 Q1.2 1.2 3.2 1.2 L11.4 1.2 Q12.5 1.2 13.2 2 L14 3 Q14.5 3.6 15.4 3.6 L27.4 3.6 Q29.2 3.6 29.2 5.4 L29.2 25.4 Q29.2 27.2 27.4 27.2 L3 27.2 Q1.2 27.2 1.2 25.4 Z" fill="#eba80d"/><path d="M1.2 7.4 Q1.2 5.8 3 5.8 L27.4 5.8 Q29.2 5.8 29.2 7.4 L29.2 25.4 Q29.2 27.2 27.4 27.2 L3 27.2 Q1.2 27.2 1.2 25.4 Z" fill="url(#fg)"/></svg>
<div class="c" style="left:1164px;top:614px">public</div>
<div class="c" style="left:1571px;top:614px;letter-spacing:0.75px">Directory</div>
<div class="c" style="left:1730.7px;top:614px;letter-spacing:0.36px">27/07/2023 0...</div>
<div class="c" style="left:1931.5px;top:614px;letter-spacing:0.45px">drwxr<i>-</i>xr<i>-</i>x</div>
<div class="c" style="left:2092px;top:614px;letter-spacing:0.81px">wordcandy...</div>
<svg class="ic" style="left:1121px;top:658px" width="32" height="30" viewBox="0 0 32 30"><path d="M1.2 3.2 Q1.2 1.2 3.2 1.2 L11.4 1.2 Q12.5 1.2 13.2 2 L14 3 Q14.5 3.6 15.4 3.6 L27.4 3.6 Q29.2 3.6 29.2 5.4 L29.2 25.4 Q29.2 27.2 27.4 27.2 L3 27.2 Q1.2 27.2 1.2 25.4 Z" fill="#eba80d"/><path d="M1.2 7.4 Q1.2 5.8 3 5.8 L27.4 5.8 Q29.2 5.8 29.2 7.4 L29.2 25.4 Q29.2 27.2 27.4 27.2 L3 27.2 Q1.2 27.2 1.2 25.4 Z" fill="url(#fg)"/></svg>
<div class="c" style="left:1164px;top:654px">ssl_certificates</div>
<div class="c" style="left:1571px;top:654px;letter-spacing:0.75px">Directory</div>
<div class="c" style="left:1730.7px;top:654px;letter-spacing:0.36px">23/11/2020 1...</div>
<div class="c" style="left:1931.5px;top:654px;letter-spacing:0.45px">drwxr<i>-</i>xr<i>-</i>x</div>
<div class="c" style="left:2092px;top:654px;letter-spacing:0.81px">wordcandy...</div>
<svg class="ic" style="left:1124.5px;top:696px" width="30" height="36" viewBox="0 0 30 36"><path d="M3 3 L19 3 L26.5 10 L26.5 33.5 L3 33.5 Z" fill="#efefef"/><path d="M1.500 1.200 L17.5 1.2 L24.5 8 L24.5 31.6 L1.5 31.600 Z" fill="#fff" stroke="#e9e9e9" stroke-width="1.3"/><path d="M17.5 1.2 L17.5 8 L24.5 8" fill="#f4f4f4" stroke="#e6e6e6" stroke-width="1.2"/></svg>
<div class="c" style="left:1164px;top:694px">.bash_logout</div>
<div class="c r" style="left:1355px;width:200px;top:694px">220</div>
<div class="c" style="left:1571px;top:694px;letter-spacing:0.75px">File</div>
<div class="c" style="left:1730.7px;top:694px;letter-spacing:0.36px">25/02/2020 1...</div>
<div class="c" style="left:1931.5px;top:694px;letter-spacing:0.45px"><i>-</i>rw<i>-</i>r<i>-</i><i>-</i>r<i>-</i><i>-</i></div>
<div class="c" style="left:2092px;top:694px;letter-spacing:0.81px">wordcandy...</div>
<svg class="ic" style="left:1124.5px;top:736px" width="30" height="36" viewBox="0 0 30 36"><path d="M3 3 L19 3 L26.5 10 L26.5 33.5 L3 33.5 Z" fill="#efefef"/><path d="M1.500 1.200 L17.5 1.2 L24.5 8 L24.5 31.6 L1.5 31.600 Z" fill="#fff" stroke="#e9e9e9" stroke-width="1.3"/><path d="M17.5 1.2 L17.5 8 L24.5 8" fill="#f4f4f4" stroke="#e6e6e6" stroke-width="1.2"/></svg>
<div class="c" style="left:1164px;top:734px">.bashrc</div>
<div class="c r" style="left:1355px;width:200px;top:734px">3,808</div>
<div class="c" style="left:1571px;top:734px;letter-spacing:0.75px">File</div>
<div class="c" style="left:1730.7px;top:734px;letter-spacing:0.36px">23/11/2020 1...</div>
<div class="c" style="left:1931.5px;top:734px;letter-spacing:0.45px"><i>-</i>rw<i>-</i>r<i>-</i><i>-</i>r<i>-</i><i>-</i></div>
<div class="c" style="left:2092px;top:734px;letter-spacing:0.81px">wordcandy...</div>
<svg class="ic" style="left:1124.5px;top:776px" width="30" height="36" viewBox="0 0 30 36"><path d="M3 3 L19 3 L26.5 10 L26.5 33.5 L3 33.5 Z" fill="#efefef"/><path d="M1.500 1.200 L17.5 1.2 L24.5 8 L24.5 31.6 L1.5 31.600 Z" fill="#fff" stroke="#e9e9e9" stroke-width="1.3"/><path d="M17.5 1.2 L17.5 8 L24.5 8" fill="#f4f4f4" stroke="#e6e6e6" stroke-width="1.2"/></svg>
<div class="c" style="left:1164px;top:774px">.profile</div>
<div class="c r" style="left:1355px;width:200px;top:774px">807</div>
<div class="c" style="left:1571px;top:774px;letter-spacing:0.75px">File</div>
<div class="c" style="left:1730.7px;top:774px;letter-spacing:0.36px">25/02/2020 1...</div>
<div class="c" style="left:1931.5px;top:774px;letter-spacing:0.45px"><i>-</i>rw<i>-</i>r<i>-</i><i>-</i>r<i>-</i><i>-</i></div>
<div class="c" style="left:2092px;top:774px;letter-spacing:0.81px">wordcandy...</div>

<!-- pane status bars -->
<div class="abs" style="left:0;top:1201px;width:1107px;height:43px;background:#f3eef4;border-bottom:2px solid #b1afb2"></div>
<div class="abs" style="left:1116.5px;top:1201px;width:1281px;height:43px;background:#f3eef4;border-bottom:2px solid #b1afb2"></div>
<div class="status" style="left:11px;top:1202px">2 files and 17 directories. Total size: At least 0 bytes</div>
<div class="status" style="left:1129px;top:1202px">3 files and 10 directories. Total size: 4,835 bytes</div>

<!-- queue -->
<div class="abs" style="left:0;top:1244px;width:2397px;height:8px;background:#e9e7ea;border-bottom:2px solid #a9a8aa"></div>
<div class="pane" style="left:0;top:1252px;width:2397px;height:210px"></div>
<div class="abs" style="left:0;top:1286px;width:2397px;height:1px;background:#e2e2e2"></div>
<div class="sep" style="left:-2px;top:1259.5px"></div>
<div class="hdr" style="left:7.000000000000001px;top:1257px;letter-spacing:0.44px">Server/Local file</div>
<div class="sep" style="left:358px;top:1259.5px"></div>
<div class="hdr" style="left:371.2px;top:1257px;letter-spacing:0.94px">Direction</div>
<div class="sep" style="left:477.5px;top:1259.5px"></div>
<div class="hdr" style="left:487.4px;top:1257px;letter-spacing:0.535px">Remote file</div>
<div class="sep" style="left:838.25px;top:1259.5px"></div>
<div class="hdr" style="left:690.25px;width:300px;text-align:right;top:1257px;letter-spacing:0.23px;margin-right:-0.23px">Size</div>
<div class="sep" style="left:998px;top:1259.5px"></div>
<div class="hdr" style="left:1006.95px;top:1257px;letter-spacing:0.63px">Priority</div>
<div class="sep" style="left:1118px;top:1259.5px"></div>
<div class="hdr" style="left:1126.95px;top:1257px;letter-spacing:0.72px">Status</div>
<div class="sep" style="left:1417.5px;top:1259.5px"></div>

<!-- tabs -->
<div class="abs" style="left:0;top:1461px;width:2397px;height:6px;background:#efefef;border-top:1px solid #b9b9b9"></div>
<div class="abs" style="left:0;top:1466.3px;width:2397px;height:45px;background:linear-gradient(#cdcdcd 0,#d8d8d8 5px,#e3e3e3 16px,#e9e9e9 100%);border-top:1.4px solid #adadad"></div>
<div class="tab" style="left:206.5px;width:233px;padding-left:14.5px;letter-spacing:.3px">Failed transfers</div>
<div class="tab" style="left:439.5px;width:300px;padding-left:14.7px;letter-spacing:.52px">Successful transfers</div>
<div class="tab" style="left:10.800px;width:194.5px;padding-left:14.6px;font-weight:bold;-webkit-text-stroke:0;letter-spacing:.35px;background:linear-gradient(#fcfcfc,#f3f3f3 70%,#ededed);top:1466.5px;height:42px;line-height:38px;box-shadow:0 1px 2px rgba(0,0,0,.18)">Queued files</div>
</div>
</body>
</html>
